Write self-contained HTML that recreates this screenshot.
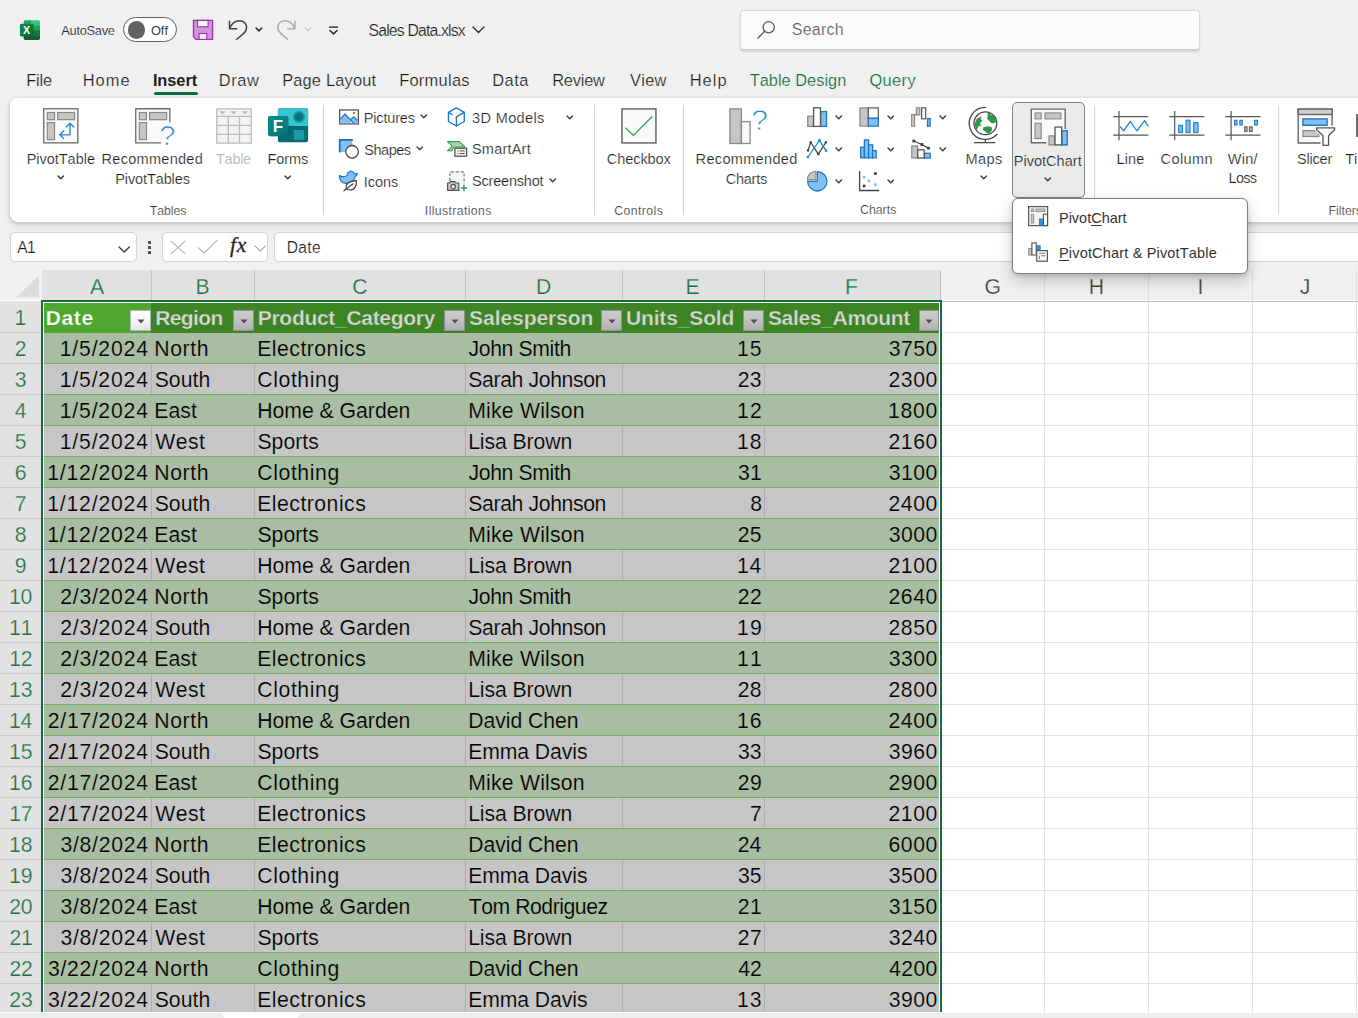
<!DOCTYPE html>
<html><head><meta charset="utf-8"><title>Sales Data.xlsx - Excel</title>
<style>
html,body{margin:0;padding:0;}
body{width:1358px;height:1018px;overflow:hidden;background:#f0f0f0;position:relative;font-family:"Liberation Sans",sans-serif;font-kerning:none;}
.t{position:absolute;white-space:pre;display:block;}
.b{position:absolute;box-sizing:border-box;display:block;}
u{text-decoration-thickness:1.3px;text-underline-offset:2px;}
</style></head><body>
<header id="titlebar">
<svg class="b" style="left:19px;top:19px;" width="22" height="22" viewBox="0 0 22 22">
<defs><clipPath id="xc"><rect x="4.7" y="1.2" width="16.3" height="19.7" rx="1.6"/></clipPath>
<linearGradient id="xg" x1="0" y1="0" x2="1" y2="1"><stop offset="0" stop-color="#18884f"/><stop offset="1" stop-color="#0b6631"/></linearGradient></defs>
<g clip-path="url(#xc)">
<rect x="4" y="1" width="8.7" height="5.1" fill="#21a366"/><rect x="12.7" y="1" width="9" height="5.1" fill="#33c481"/>
<rect x="4" y="6.1" width="8.7" height="5" fill="#107c41"/><rect x="12.7" y="6.1" width="9" height="5" fill="#21a366"/>
<rect x="4" y="11.1" width="8.7" height="5" fill="#185c37"/><rect x="12.7" y="11.1" width="9" height="5" fill="#107c41"/>
<rect x="4" y="16.1" width="18" height="5" fill="#185c37"/>
</g>
<rect x="1.6" y="5.4" width="13.2" height="12.6" rx="1.3" fill="#0a5a2c" opacity=".35"/>
<rect x="0.9" y="4.7" width="13.6" height="12.6" rx="1.3" fill="url(#xg)"/>
<text x="7.6" y="14.9" font-family="Liberation Sans, sans-serif" font-weight="700" font-size="10.6" fill="#fff" text-anchor="middle">X</text>
</svg>
<span class="t" style="left:61.27px;top:22.50px;font-size:12.8px;line-height:15px;letter-spacing:-0.259px;color:#1e1e1e;-webkit-text-stroke:.15px #f0f0f0;">AutoSave</span>
<div class="b" style="left:123px;top:17px;width:54px;height:24.5px;border:1px solid #5f5f5f;border-radius:12.5px;background:#fff;"></div>
<div class="b" style="left:127.5px;top:21.25px;width:17.5px;height:17.5px;border-radius:50%;background:#616161;"></div>
<span class="t" style="left:150.89px;top:22.50px;font-size:12.8px;line-height:15px;letter-spacing:0.009px;color:#3a3a3a;">Off</span>
<svg class="b" style="left:192px;top:19px;" width="22" height="22" viewBox="0 0 22 22">
<path d="M1.5 1.4 H20.6 V20.4 H4 L1.5 17.7 Z" fill="#d392dc" stroke="#9a2fb0" stroke-width="1.3" stroke-linejoin="miter"/>
<rect x="5.6" y="1.4" width="10.5" height="6.4" fill="#fbf3fc" stroke="#9a2fb0" stroke-width="1.1"/>
<rect x="7.1" y="14.5" width="7.7" height="5.9" fill="#fbf3fc" stroke="#9a2fb0" stroke-width="1.1"/>
</svg>
<svg class="b" style="left:226px;top:17px;" width="24" height="26" viewBox="0 0 24 26"><path d="M3.5 3.7 V11.8 H11.2" fill="none" stroke="#444" stroke-width="1.5" stroke-linecap="butt" stroke-linejoin="miter"/><path d="M3.8 11.4 C5.6 6.9 9.3 3.8 13.6 3.8 C17.8 3.8 20.6 7 20.6 10.6 C20.6 13 19.6 14.7 18 16.1 L10.2 22.7" fill="none" stroke="#444" stroke-width="1.5" stroke-linecap="butt" stroke-linejoin="round"/></svg>
<svg class="b" style="left:254.4px;top:26.45px;" width="9.8" height="6.9" viewBox="0 0 9.8 6.9"><path d="M2 2 L4.9 4.9 L7.8 2" fill="none" stroke="#2a2a2a" stroke-width="1.5" stroke-linecap="round" stroke-linejoin="round"/></svg>
<svg class="b" style="left:274px;top:17px;" width="24" height="26" viewBox="0 0 24 26"><g transform="translate(24.4,0) scale(-1,1)"><path d="M3.5 3.7 V11.8 H11.2" fill="none" stroke="#adadad" stroke-width="1.5" stroke-linecap="butt" stroke-linejoin="miter"/><path d="M3.8 11.4 C5.6 6.9 9.3 3.8 13.6 3.8 C17.8 3.8 20.6 7 20.6 10.6 C20.6 13 19.6 14.7 18 16.1 L10.2 22.7" fill="none" stroke="#adadad" stroke-width="1.5" stroke-linecap="butt" stroke-linejoin="round"/></g></svg>
<svg class="b" style="left:302.5px;top:26.45px;" width="9.6" height="6.7" viewBox="0 0 9.6 6.7"><path d="M2 2 L4.8 4.7 L7.6 2" fill="none" stroke="#c6c6c6" stroke-width="1.3" stroke-linecap="round" stroke-linejoin="round"/></svg>
<svg class="b" style="left:326px;top:23px;" width="14" height="14" viewBox="0 0 14 14"><path d="M3 4.1 H12" stroke="#2a2a2a" stroke-width="1.4" fill="none"/><path d="M3.9 7.5 L7.5 10.9 L11.1 7.5" stroke="#2a2a2a" stroke-width="1.5" fill="none" stroke-linecap="round" stroke-linejoin="round"/></svg>
<span class="t" style="left:368.53px;top:22.20px;font-size:15.8px;line-height:17px;letter-spacing:-0.832px;color:#1e1e1e;-webkit-text-stroke:.2px #f0f0f0;">Sales Data.xlsx</span>
<svg class="b" style="left:470.5px;top:25.2px;" width="15" height="9.6" viewBox="0 0 15 9.6"><path d="M2 2 L7.5 7.6 L13 2" fill="none" stroke="#333" stroke-width="1.4" stroke-linecap="round" stroke-linejoin="round"/></svg>
<div class="b" style="left:740px;top:10px;width:460px;height:39.5px;background:#fbfbfb;border:1px solid #d9d9d9;border-bottom-color:#c9c9c9;border-radius:4px;box-shadow:0 1.5px 2px rgba(0,0,0,.13);"></div>
<svg class="b" style="left:755px;top:19px;" width="22" height="22" viewBox="0 0 22 22"><circle cx="13.7" cy="8.3" r="5.6" fill="none" stroke="#5a5a5a" stroke-width="1.3"/><path d="M9.7 12.3 L3 19" stroke="#5a5a5a" stroke-width="1.3" stroke-linecap="round"/></svg>
<span class="t" style="left:791.77px;top:21.00px;font-size:16px;line-height:17px;letter-spacing:0.214px;color:#5a5a5a;-webkit-text-stroke:.2px #fbfbfb;">Search</span>
</header>
<nav id="ribbon-tabs">
<span class="t" style="left:26.15px;top:70.50px;font-size:16.4px;line-height:18px;letter-spacing:-0.117px;color:#1e1e1e;-webkit-text-stroke:.2px #f0f0f0;">File</span>
<span class="t" style="left:82.65px;top:70.50px;font-size:16.4px;line-height:18px;letter-spacing:1.109px;color:#1e1e1e;-webkit-text-stroke:.2px #f0f0f0;">Home</span>
<span class="t" style="left:218.65px;top:70.50px;font-size:16.4px;line-height:18px;letter-spacing:0.679px;color:#1e1e1e;-webkit-text-stroke:.2px #f0f0f0;">Draw</span>
<span class="t" style="left:282.15px;top:70.50px;font-size:16.4px;line-height:18px;letter-spacing:0.187px;color:#1e1e1e;-webkit-text-stroke:.2px #f0f0f0;">Page Layout</span>
<span class="t" style="left:399.15px;top:70.50px;font-size:16.4px;line-height:18px;letter-spacing:0.299px;color:#1e1e1e;-webkit-text-stroke:.2px #f0f0f0;">Formulas</span>
<span class="t" style="left:492.15px;top:70.50px;font-size:16.4px;line-height:18px;letter-spacing:0.568px;color:#1e1e1e;-webkit-text-stroke:.2px #f0f0f0;">Data</span>
<span class="t" style="left:552.15px;top:70.50px;font-size:16.4px;line-height:18px;letter-spacing:-0.193px;color:#1e1e1e;-webkit-text-stroke:.2px #f0f0f0;">Review</span>
<span class="t" style="left:629.93px;top:70.50px;font-size:16.4px;line-height:18px;letter-spacing:0.328px;color:#1e1e1e;-webkit-text-stroke:.2px #f0f0f0;">View</span>
<span class="t" style="left:689.65px;top:70.50px;font-size:16.4px;line-height:18px;letter-spacing:1.102px;color:#1e1e1e;-webkit-text-stroke:.2px #f0f0f0;">Help</span>
<span class="t" style="left:152.90px;top:70.50px;font-size:16.4px;line-height:18px;letter-spacing:-0.072px;color:#1f1f1f;font-weight:700;">Insert</span>
<div class="b" style="left:154px;top:91.7px;width:43.5px;height:2.9px;background:#0f703b;border-radius:1.5px;"></div>
<span class="t" style="left:749.63px;top:70.50px;font-size:16.4px;line-height:18px;letter-spacing:0.009px;color:#0e6e3a;-webkit-text-stroke:.2px #f0f0f0;">Table Design</span>
<span class="t" style="left:869.42px;top:70.50px;font-size:16.4px;line-height:18px;letter-spacing:0.412px;color:#0e6e3a;-webkit-text-stroke:.2px #f0f0f0;">Query</span>
</nav>
<section id="ribbon">
<div class="b" style="left:10px;top:97.5px;width:1360px;height:124.3px;background:#fff;border-radius:8px 0 0 8px;box-shadow:0 1px 4px rgba(0,0,0,.18),0 4px 8px rgba(0,0,0,.08);"></div>
<svg class="b" style="left:42px;top:107px;" width="38" height="38" viewBox="0 0 38 38"><rect x="1.75" y="1.75" width="34.1" height="34.1" fill="#fafafa" stroke="#696969" stroke-width="1.3"/><rect x="5.3" y="5.5" width="7.2" height="7.2" fill="#c8c6c4" stroke="#8a8886" stroke-width="1.2"/><rect x="15.6" y="5.5" width="17" height="7.2" fill="#c8c6c4" stroke="#8a8886" stroke-width="1.2"/><rect x="5.3" y="15.6" width="7.2" height="17" fill="#c8c6c4" stroke="#8a8886" stroke-width="1.2"/><path d="M18.2 27.8 H28 V16.6 M21.6 24 L17.8 27.8 L21.6 31.6 M24.3 20 L28 16.2 L31.7 20" fill="none" stroke="#1e88d2" stroke-width="1.35" stroke-linecap="round" stroke-linejoin="round"/></svg>
<span class="t" style="left:26.71px;top:150.80px;font-size:14.5px;line-height:16px;letter-spacing:-0.030px;color:#1e1e1e;-webkit-text-stroke:.2px #fff;">PivotTable</span>
<svg class="b" style="left:55.55px;top:173.93px;" width="9.5" height="6.75" viewBox="0 0 9.5 6.75"><path d="M2 2 L4.75 4.75 L7.5 2" fill="none" stroke="#333" stroke-width="1.35" stroke-linecap="round" stroke-linejoin="round"/></svg>
<svg class="b" style="left:134px;top:107px;" width="42" height="42" viewBox="0 0 42 42"><path d="M1.75 1.75 H35.85 V35.85 H1.75 Z" fill="#fafafa"/><path d="M35.85 15.5 V1.75 H1.75 V35.85 H27" fill="none" stroke="#696969" stroke-width="1.3"/><rect x="5.3" y="5.5" width="7.2" height="7.2" fill="#c8c6c4" stroke="#8a8886" stroke-width="1.2"/><rect x="15.6" y="5.5" width="17" height="7.2" fill="#c8c6c4" stroke="#8a8886" stroke-width="1.2"/><rect x="5.3" y="15.6" width="7.2" height="17" fill="#c8c6c4" stroke="#8a8886" stroke-width="1.2"/><text x="25.4" y="38.2" font-family="Liberation Sans, sans-serif" font-size="28.5" fill="#1e88d2" stroke="#fcfcfc" stroke-width=".7">?</text></svg>
<span class="t" style="left:101.61px;top:150.80px;font-size:14.5px;line-height:16px;letter-spacing:0.280px;color:#1e1e1e;-webkit-text-stroke:.2px #fff;">Recommended</span>
<span class="t" style="left:115.21px;top:170.60px;font-size:14.5px;line-height:16px;letter-spacing:-0.104px;color:#1e1e1e;-webkit-text-stroke:.2px #fff;">PivotTables</span>
<svg class="b" style="left:215px;top:107px;" width="38" height="38" viewBox="0 0 38 38">
<rect x="1.8" y="1.9" width="34.4" height="34.2" fill="#f4f4f4" stroke="#bcbcbc" stroke-width="1.3"/>
<path d="M1.8 9.3 H36.2 M1.8 18.3 H36.2 M1.8 27.4 H36.2 M13.3 9.3 V36 M24.5 9.3 V36" stroke="#bcbcbc" stroke-width="1.3" fill="none"/>
<path d="M4.2 4.3 H10.8 L7.5 7.6 Z M15.4 4.3 H22 L18.7 7.6 Z M26.7 4.3 H33.3 L30 7.6 Z" fill="#bcbcbc"/>
</svg>
<span class="t" style="left:216.07px;top:150.80px;font-size:14.5px;line-height:16px;letter-spacing:-0.300px;color:#bdbdbd;">Table</span>
<svg class="b" style="left:267px;top:107px;" width="42" height="37" viewBox="0 0 42 37">
<defs><linearGradient id="fg" x1="0" y1="0" x2="1" y2="1"><stop offset="0" stop-color="#058f92"/><stop offset="1" stop-color="#037478"/></linearGradient></defs>
<rect x="10.9" y="1.2" width="30.2" height="34" rx="1.8" fill="#036c70"/>
<path d="M10.9 3 A1.8 1.8 0 0 1 12.7 1.2 H39.3 A1.8 1.8 0 0 1 41.100 3 V19 H10.9 Z" fill="#37c6d0"/>
<circle cx="32" cy="9.9" r="6" fill="#1a9ba1"/><circle cx="32" cy="9.9" r="4.2" fill="#03787c"/>
<rect x="26.8" y="23" width="10.3" height="9.8" fill="#1a9ba1"/>
<rect x="2" y="10" width="20.1" height="19.9" rx="1.6" fill="#025f63" opacity=".35"/>
<rect x="1" y="9" width="20.1" height="19.9" rx="1.6" fill="url(#fg)"/>
<text x="11" y="25" font-family="Liberation Sans, sans-serif" font-weight="700" font-size="17" fill="#fff" text-anchor="middle">F</text>
</svg>
<span class="t" style="left:267.41px;top:150.80px;font-size:14.5px;line-height:16px;letter-spacing:-0.041px;color:#1e1e1e;-webkit-text-stroke:.2px #fff;">Forms</span>
<svg class="b" style="left:282.75px;top:174.12px;" width="9.5" height="6.75" viewBox="0 0 9.5 6.75"><path d="M2 2 L4.75 4.75 L7.5 2" fill="none" stroke="#333" stroke-width="1.35" stroke-linecap="round" stroke-linejoin="round"/></svg>
<span class="t" style="left:149.72px;top:203.50px;font-size:12.3px;line-height:14px;letter-spacing:-0.039px;color:#333;-webkit-text-stroke:.2px #fff;">Tables</span>
<div class="b" style="left:323.0px;top:104.5px;width:1px;height:110px;background:#d4d4d4;"></div>
<svg class="b" style="left:338px;top:108px;" width="22" height="18" viewBox="0 0 22 18">
<rect x="1.65" y="1.95" width="18.7" height="14" fill="#fff" stroke="#555" stroke-width="1.3"/>
<path d="M2.3 11.3 L6.9 6 L14 13.2 L12 15.3 H2.3 Z" fill="#83bff0"/>
<path d="M12.3 11.6 L15.7 8.8 L19.7 12.6 V15.3 H15.9 Z" fill="#83bff0"/>
<path d="M2.3 11.3 L6.9 6 L16 15.3 M12.4 11.6 L15.7 8.8 L19.7 12.6" fill="none" stroke="#1f78c6" stroke-width="1.2"/>
<circle cx="16" cy="5" r="1.25" fill="#e8731a"/>
</svg>
<span class="t" style="left:363.81px;top:109.80px;font-size:14.5px;line-height:16px;letter-spacing:-0.181px;color:#1e1e1e;-webkit-text-stroke:.2px #fff;">Pictures</span>
<svg class="b" style="left:418.65px;top:113.33px;" width="9.5" height="6.75" viewBox="0 0 9.5 6.75"><path d="M2 2 L4.75 4.75 L7.5 2" fill="none" stroke="#333" stroke-width="1.3" stroke-linecap="round" stroke-linejoin="round"/></svg>
<svg class="b" style="left:338px;top:138px;" width="24" height="22" viewBox="0 0 24 22">
<path d="M1.6 1.9 H14.3 V13.9 H1.6 Z" fill="#83bff0"/>
<path d="M1.7 14.5 V1.8 H14.9" fill="none" stroke="#1b6fbd" stroke-width="1.7"/>
<circle cx="14.1" cy="13.8" r="6.3" fill="#fff" stroke="#444" stroke-width="1.3"/>
</svg>
<span class="t" style="left:364.34px;top:141.60px;font-size:14.5px;line-height:16px;letter-spacing:-0.479px;color:#1e1e1e;-webkit-text-stroke:.2px #fff;">Shapes</span>
<svg class="b" style="left:414.75px;top:145.03px;" width="9.5" height="6.75" viewBox="0 0 9.5 6.75"><path d="M2 2 L4.75 4.75 L7.5 2" fill="none" stroke="#333" stroke-width="1.3" stroke-linecap="round" stroke-linejoin="round"/></svg>
<svg class="b" style="left:338px;top:170px;" width="22" height="22" viewBox="0 0 22 22">
<path d="M1.3 5.6 C4.5 7.2 8 7 9.2 5.4 C9 2.6 11.5 1 14 1.6 C15.5 2 16.3 3 16.8 4 L19.3 3.4 C19 5.6 17.6 6.6 16.9 7 C16.6 9.5 14.5 11.6 12 12.3 L8 13.4 C4 13.8 1.6 10.5 1.3 5.6 Z" fill="#83bff0" stroke="#1f78c6" stroke-width="1.2" stroke-linejoin="round"/>
<path d="M8.3 18.4 C7.2 14 11 11 18.4 10.7 C18.9 15.6 16.6 20.3 11.6 20 C10 19.9 9 19.3 8.3 18.4 Z" fill="#fff" stroke="#444" stroke-width="1.2" stroke-linejoin="round"/>
<path d="M5.9 20.8 L15 13.8" stroke="#444" stroke-width="1.2" stroke-linecap="round"/>
</svg>
<span class="t" style="left:363.66px;top:173.80px;font-size:14.5px;line-height:16px;letter-spacing:-0.024px;color:#1e1e1e;-webkit-text-stroke:.2px #fff;">Icons</span>
<svg class="b" style="left:446px;top:106px;" width="22" height="22" viewBox="0 0 22 22">
<path d="M10.4 1.9 L18.3 6.4 V15.5 L10.4 20 L2.5 15.5 V6.4 Z" fill="#fff" stroke="#1f78c6" stroke-width="1.4" stroke-linejoin="round"/>
<path d="M18.3 6.4 L10.4 11 V20 M2.5 6.4 L6.2 8.5" fill="none" stroke="#1f78c6" stroke-width="1.4" stroke-linecap="round"/>
</svg>
<span class="t" style="left:472.05px;top:109.50px;font-size:14.5px;line-height:16px;letter-spacing:0.371px;color:#1e1e1e;-webkit-text-stroke:.2px #fff;">3D Models</span>
<svg class="b" style="left:564.75px;top:114.12px;" width="9.5" height="6.75" viewBox="0 0 9.5 6.75"><path d="M2 2 L4.75 4.75 L7.5 2" fill="none" stroke="#333" stroke-width="1.3" stroke-linecap="round" stroke-linejoin="round"/></svg>
<svg class="b" style="left:446px;top:140px;" width="23" height="18" viewBox="0 0 23 18">
<path d="M1.5 1.6 H13.3 L18.6 6.4 V7 H8 L6 10.8 H1.5 L6.3 6.2 Z" fill="#a3d9af" stroke="#2f9a54" stroke-width="1.1" stroke-linejoin="round"/>
<rect x="8.9" y="8.2" width="11.7" height="8" fill="#f2f2f2" stroke="#555" stroke-width="1.3"/>
<path d="M11.3 10.9 H12.3 M13.6 10.9 H18.6 M11.3 13.5 H12.3 M13.6 13.5 H18.6" stroke="#555" stroke-width="1"/>
</svg>
<span class="t" style="left:471.94px;top:141.40px;font-size:14.5px;line-height:16px;letter-spacing:0.224px;color:#1e1e1e;-webkit-text-stroke:.2px #fff;">SmartArt</span>
<svg class="b" style="left:446px;top:170px;" width="22" height="22" viewBox="0 0 22 22">
<path d="M3.9 11 V1.8 H18.1 V14.5" fill="#f8f8f8" stroke="#777" stroke-width="1.2" stroke-dasharray="3.2 1.8"/>
<path d="M1.6 13 H3.6 L4.6 11.6 H8.8 L9.8 13 H12.8 V20.3 H1.6 Z" fill="#c8c8c8" stroke="#4f4f4f" stroke-width="1.2" stroke-linejoin="round"/>
<circle cx="7.2" cy="16.6" r="2.2" fill="#fff" stroke="#4f4f4f" stroke-width="1.2"/>
<path d="M14.8 18.1 H21 M17.9 15 V21.2" stroke="#2f9a54" stroke-width="1.5"/>
</svg>
<span class="t" style="left:471.94px;top:173.40px;font-size:14.5px;line-height:16px;letter-spacing:-0.187px;color:#1e1e1e;-webkit-text-stroke:.2px #fff;">Screenshot</span>
<svg class="b" style="left:547.65px;top:177.12px;" width="9.5" height="6.75" viewBox="0 0 9.5 6.75"><path d="M2 2 L4.75 4.75 L7.5 2" fill="none" stroke="#333" stroke-width="1.3" stroke-linecap="round" stroke-linejoin="round"/></svg>
<span class="t" style="left:424.86px;top:203.50px;font-size:12.3px;line-height:14px;letter-spacing:0.364px;color:#333;-webkit-text-stroke:.2px #fff;">Illustrations</span>
<div class="b" style="left:594.0px;top:104.5px;width:1px;height:110px;background:#d4d4d4;"></div>
<svg class="b" style="left:620px;top:107px;" width="38" height="38" viewBox="0 0 38 38"><rect x="1.95" y="1.95" width="34" height="34" fill="#fafafa" stroke="#5c5c5c" stroke-width="1.4"/><path d="M5.4 20.7 L13.4 28.4 L32.3 9.5" fill="none" stroke="#2ea44f" stroke-width="1.35"/></svg>
<span class="t" style="left:606.86px;top:150.80px;font-size:14.5px;line-height:16px;letter-spacing:-0.069px;color:#1e1e1e;-webkit-text-stroke:.2px #fff;">Checkbox</span>
<span class="t" style="left:614.28px;top:203.50px;font-size:12.3px;line-height:14px;letter-spacing:0.395px;color:#333;-webkit-text-stroke:.2px #fff;">Controls</span>
<div class="b" style="left:683.0px;top:104.5px;width:1px;height:110px;background:#d4d4d4;"></div>
<svg class="b" style="left:727px;top:106px;" width="42" height="40" viewBox="0 0 42 40">
<rect x="2.9" y="2.9" width="11.5" height="34.6" fill="#c8c6c4" stroke="#8a8886" stroke-width="1.3"/>
<rect x="14.4" y="15.6" width="8.7" height="21.9" fill="#fafafa" stroke="#8a8886" stroke-width="1.3"/>
<text x="24.3" y="23.8" font-family="Liberation Sans, sans-serif" font-size="30" fill="#1e88d2" stroke="#fff" stroke-width=".8">?</text>
</svg>
<span class="t" style="left:695.61px;top:150.80px;font-size:14.5px;line-height:16px;letter-spacing:0.330px;color:#1e1e1e;-webkit-text-stroke:.2px #fff;">Recommended</span>
<span class="t" style="left:725.66px;top:170.60px;font-size:14.5px;line-height:16px;letter-spacing:-0.229px;color:#1e1e1e;-webkit-text-stroke:.2px #fff;">Charts</span>
<svg class="b" style="left:806px;top:106px;" width="23" height="23" viewBox="0 0 23 23"><rect x="1.70" y="10.20" width="5.80" height="10.20" fill="#c8c6c4" stroke="#8a8886" stroke-width="1.2"/><rect x="14.60" y="5.60" width="5.90" height="14.80" fill="#83bff0" stroke="#1f78c6" stroke-width="1.3"/><rect x="7.60" y="1.80" width="6.90" height="18.60" fill="#fff" stroke="#555" stroke-width="1.3"/></svg>
<svg class="b" style="left:833.65px;top:114.12px;" width="9.5" height="6.75" viewBox="0 0 9.5 6.75"><path d="M2 2 L4.75 4.75 L7.5 2" fill="none" stroke="#333" stroke-width="1.3" stroke-linecap="round" stroke-linejoin="round"/></svg>
<svg class="b" style="left:858px;top:106px;" width="23" height="23" viewBox="0 0 23 23"><rect x="1.90" y="1.90" width="8.40" height="18.20" fill="#c8c6c4" stroke="#8a8886" stroke-width="1.2"/><rect x="10.30" y="1.90" width="10.00" height="10.40" fill="#fcfcfc" stroke="#555" stroke-width="1.2"/><rect x="10.30" y="12.30" width="10.00" height="7.80" fill="#83bff0" stroke="#1f78c6" stroke-width="1.3"/></svg>
<svg class="b" style="left:885.65px;top:114.12px;" width="9.5" height="6.75" viewBox="0 0 9.5 6.75"><path d="M2 2 L4.75 4.75 L7.5 2" fill="none" stroke="#333" stroke-width="1.3" stroke-linecap="round" stroke-linejoin="round"/></svg>
<svg class="b" style="left:910px;top:106px;" width="23" height="23" viewBox="0 0 23 23"><path d="M1.6000000000000227 20.299999999999997 V8.599999999999994 H6.2999999999999545 V1.7999999999999972 H9.799999999999955 V8.900000000000006 H4.600000000000023 V20.299999999999997 Z" fill="#c8c6c4" stroke="#8a8886" stroke-width="1.1"/><rect x="11.60" y="1.80" width="4.10" height="11.00" fill="#fcfcfc" stroke="#555" stroke-width="1.2"/><rect x="17.50" y="12.60" width="2.70" height="7.60" fill="#83bff0" stroke="#1f78c6" stroke-width="1.3"/></svg>
<svg class="b" style="left:937.55px;top:114.12px;" width="9.5" height="6.75" viewBox="0 0 9.5 6.75"><path d="M2 2 L4.75 4.75 L7.5 2" fill="none" stroke="#333" stroke-width="1.3" stroke-linecap="round" stroke-linejoin="round"/></svg>
<svg class="b" style="left:806px;top:138px;" width="23" height="23" viewBox="0 0 23 23"><path d="M2.0 12.4 L4.7 4.3 L12.3 16.1 L19.9 4.3" fill="none" stroke="#3b3b3b" stroke-width="1.2" stroke-linejoin="round"/><rect x="0.9" y="11.3" width="2.2" height="2.2" fill="#3b3b3b"/><rect x="3.6" y="3.2" width="2.2" height="2.2" fill="#3b3b3b"/><rect x="11.2" y="15.0" width="2.2" height="2.2" fill="#3b3b3b"/><rect x="18.8" y="3.2" width="2.2" height="2.2" fill="#3b3b3b"/><path d="M2.0 19.0 L13.4 2.3 L20.1 12.6" fill="none" stroke="#1e88d2" stroke-width="1.3" stroke-linejoin="round"/><rect x="0.8" y="17.8" width="2.4" height="2.4" fill="#1e88d2"/><rect x="12.2" y="1.1" width="2.4" height="2.4" fill="#1e88d2"/><rect x="18.9" y="11.4" width="2.4" height="2.4" fill="#1e88d2"/></svg>
<svg class="b" style="left:833.65px;top:146.03px;" width="9.5" height="6.75" viewBox="0 0 9.5 6.75"><path d="M2 2 L4.75 4.75 L7.5 2" fill="none" stroke="#333" stroke-width="1.3" stroke-linecap="round" stroke-linejoin="round"/></svg>
<svg class="b" style="left:858px;top:138px;" width="23" height="23" viewBox="0 0 23 23"><rect x="2.70" y="9.20" width="3.70" height="10.60" fill="#83bff0" stroke="#1f78c6" stroke-width="1.3"/><rect x="6.40" y="1.90" width="4.20" height="17.90" fill="#83bff0" stroke="#1f78c6" stroke-width="1.3"/><rect x="10.60" y="6.80" width="4.00" height="13.00" fill="#83bff0" stroke="#1f78c6" stroke-width="1.3"/><rect x="14.60" y="12.70" width="3.60" height="7.10" fill="#83bff0" stroke="#1f78c6" stroke-width="1.3"/></svg>
<svg class="b" style="left:885.65px;top:146.03px;" width="9.5" height="6.75" viewBox="0 0 9.5 6.75"><path d="M2 2 L4.75 4.75 L7.5 2" fill="none" stroke="#333" stroke-width="1.3" stroke-linecap="round" stroke-linejoin="round"/></svg>
<svg class="b" style="left:910px;top:138px;" width="23" height="23" viewBox="0 0 23 23"><rect x="1.80" y="8.00" width="5.80" height="12.00" fill="#c8c6c4" stroke="#8a8886" stroke-width="1.2"/><rect x="14.40" y="15.30" width="5.80" height="4.70" fill="#83bff0" stroke="#1f78c6" stroke-width="1.3"/><rect x="7.70" y="11.80" width="6.50" height="8.20" fill="#fcfcfc" stroke="#555" stroke-width="1.3"/><path d="M3.8 3.0 L11.9 6.5 L18.4 10.2" fill="none" stroke="#3b3b3b" stroke-width="1.2"/><rect x="2.4" y="1.6" width="2.8" height="2.8" fill="#3b3b3b"/><rect x="10.5" y="5.1" width="2.8" height="2.8" fill="#3b3b3b"/><rect x="17.0" y="8.8" width="2.8" height="2.8" fill="#3b3b3b"/></svg>
<svg class="b" style="left:937.55px;top:146.03px;" width="9.5" height="6.75" viewBox="0 0 9.5 6.75"><path d="M2 2 L4.75 4.75 L7.5 2" fill="none" stroke="#333" stroke-width="1.3" stroke-linecap="round" stroke-linejoin="round"/></svg>
<svg class="b" style="left:806px;top:170px;" width="23" height="23" viewBox="0 0 23 23"><path d="M11.3 11.3 V1.6 A9.7 9.7 0 1 1 1.6 11.3 Z" fill="#83bff0" stroke="#1f78c6" stroke-width="1.3" stroke-linejoin="round"/><path d="M9.9 9.9 H1.2 A8.7 8.7 0 0 1 9.9 1.2 Z" fill="#c8c6c4" stroke="#8a8886" stroke-width="1.1" stroke-linejoin="round"/></svg>
<svg class="b" style="left:833.65px;top:178.03px;" width="9.5" height="6.75" viewBox="0 0 9.5 6.75"><path d="M2 2 L4.75 4.75 L7.5 2" fill="none" stroke="#333" stroke-width="1.3" stroke-linecap="round" stroke-linejoin="round"/></svg>
<svg class="b" style="left:858px;top:170px;" width="23" height="23" viewBox="0 0 23 23"><path d="M1.6 1 V20.5 H21" fill="none" stroke="#444" stroke-width="1.3"/><rect x="16.1" y="2.3" width="2.6" height="2.6" fill="#333"/><rect x="4.8" y="14.7" width="2.6" height="2.6" fill="#333"/><rect x="4.8" y="5.9" width="2.6" height="2.6" fill="#7fbdf0"/><rect x="9.6" y="9.6" width="2.6" height="2.6" fill="#7fbdf0"/><rect x="16.1" y="13.3" width="2.6" height="2.6" fill="#7fbdf0"/></svg>
<svg class="b" style="left:885.65px;top:178.03px;" width="9.5" height="6.75" viewBox="0 0 9.5 6.75"><path d="M2 2 L4.75 4.75 L7.5 2" fill="none" stroke="#333" stroke-width="1.3" stroke-linecap="round" stroke-linejoin="round"/></svg>
<span class="t" style="left:859.98px;top:203.20px;font-size:12.3px;line-height:14px;letter-spacing:0.028px;color:#333;-webkit-text-stroke:.2px #fff;">Charts</span>
<svg class="b" style="left:966px;top:105px;" width="34" height="40" viewBox="0 0 34 40">
<circle cx="19.4" cy="18.3" r="11.4" fill="#fff" stroke="#484848" stroke-width="1.3"/>
<path d="M11.2 13.2 L15.2 11.8 L14.8 14.6 L16.6 15.6 L14 18.3 L15.6 21.4 L13.3 20.4 L11.8 22.6 L10.6 25.2 C8.6 22.4 8.2 16.6 11.2 13.2 Z" fill="#2e9648"/>
<path d="M21.6 8 L23.6 7.6 L24.6 9.8 L27.4 10.4 L29.6 14 L30 17.2 L27 18.4 L25 17.8 L22.8 15.4 L21 13.6 L21.8 11 Z" fill="#2e9648"/>
<path d="M17.2 22.6 L21.6 21.2 L25.4 22 L26.2 24.6 L24.4 27.8 L21.4 28.6 L19.2 26.6 L17 25 Z" fill="#2e9648"/>
<path d="M19.6 2.4 A16 16 0 1 0 31 29.3" fill="none" stroke="#484848" stroke-width="1.3" stroke-linecap="round"/>
<path d="M19.4 34.3 V37.7 M8 37.7 H29.4" fill="none" stroke="#484848" stroke-width="1.3"/>
</svg>
<span class="t" style="left:965.61px;top:150.60px;font-size:14.5px;line-height:16px;letter-spacing:0.419px;color:#1e1e1e;-webkit-text-stroke:.2px #fff;">Maps</span>
<svg class="b" style="left:978.75px;top:174.32px;" width="9.5" height="6.75" viewBox="0 0 9.5 6.75"><path d="M2 2 L4.75 4.75 L7.5 2" fill="none" stroke="#333" stroke-width="1.3" stroke-linecap="round" stroke-linejoin="round"/></svg>
<div class="b" style="left:1012px;top:102px;width:73px;height:95.6px;background:#ebebeb;border:1px solid #848484;border-radius:5px;"></div>
<svg class="b" style="left:1029px;top:107px;" width="40" height="40" viewBox="0 0 40 40">
<path d="M1.7 1.4 H36.9 V36.3 H1.7 Z" fill="#fafafa"/>
<path d="M36.2 22 V2.1 H2.3 V35.7 H17.4" fill="none" stroke="#696969" stroke-width="1.4"/>
<rect x="6" y="5.9" width="6.2" height="6" fill="#c8c6c4" stroke="#8a8886" stroke-width="1.1"/>
<rect x="16" y="5.9" width="16" height="6" fill="#c8c6c4" stroke="#8a8886" stroke-width="1.1"/>
<rect x="6" y="16.2" width="6.2" height="15.4" fill="#c8c6c4" stroke="#8a8886" stroke-width="1.1"/>
<rect x="20" y="28.9" width="5.8" height="9" fill="#c8c6c4" stroke="#8a8886" stroke-width="1.2"/>
<rect x="32.7" y="23.7" width="5.5" height="14.2" fill="#83bff0" stroke="#1f78c6" stroke-width="1.4"/>
<rect x="26" y="20.1" width="6.7" height="17.8" fill="#fff" stroke="#555" stroke-width="1.3"/>
</svg>
<span class="t" style="left:1013.71px;top:152.60px;font-size:14.5px;line-height:16px;letter-spacing:0.034px;color:#1e1e1e;-webkit-text-stroke:.2px #ebebeb;">PivotChart</span>
<svg class="b" style="left:1042.65px;top:176.12px;" width="9.5" height="6.75" viewBox="0 0 9.5 6.75"><path d="M2 2 L4.75 4.75 L7.5 2" fill="none" stroke="#333" stroke-width="1.3" stroke-linecap="round" stroke-linejoin="round"/></svg>
<div class="b" style="left:1094.0px;top:104.5px;width:1px;height:110px;background:#d4d4d4;"></div>
<svg class="b" style="left:1112px;top:110px;" width="38" height="32" viewBox="0 0 38 32"><path d="M1.3 6.7 H36.4 M1.3 25.1 H36.4 M7 1 V30.3" stroke="#555" stroke-width="1.2" fill="none"/><path d="M8.0 16.6 L11.7 20.8 L18.2 11.3 L25.0 20.8 L32.6 10.6 L36.4 16.4" fill="none" stroke="#1e88d2" stroke-width="1.3" stroke-linejoin="round"/></svg>
<span class="t" style="left:1116.61px;top:150.60px;font-size:14.5px;line-height:16px;letter-spacing:0.073px;color:#1e1e1e;-webkit-text-stroke:.2px #fff;">Line</span>
<svg class="b" style="left:1168px;top:110px;" width="38" height="32" viewBox="0 0 38 32"><path d="M1.3 6.7 H36.5 M1.3 25.1 H36.5 M6.7 1 V30.3" stroke="#555" stroke-width="1.2" fill="none"/><rect x="10.70" y="15.30" width="3.70" height="7.20" fill="#83bff0" stroke="#1e88d2" stroke-width="1.2"/><rect x="18.10" y="10.20" width="3.90" height="12.30" fill="#83bff0" stroke="#1e88d2" stroke-width="1.2"/><rect x="25.70" y="12.60" width="4.30" height="9.90" fill="#83bff0" stroke="#1e88d2" stroke-width="1.2"/></svg>
<span class="t" style="left:1160.56px;top:150.60px;font-size:14.5px;line-height:16px;letter-spacing:0.403px;color:#1e1e1e;-webkit-text-stroke:.2px #fff;">Column</span>
<svg class="b" style="left:1224px;top:110px;" width="38" height="32" viewBox="0 0 38 32"><path d="M1.4 6.7 H36.5 M1.4 25.1 H36.5 M7.1 1 V30.3" stroke="#555" stroke-width="1.2" fill="none"/><rect x="10.60" y="10.30" width="2.40" height="4.70" fill="#83bff0" stroke="#1f78c6" stroke-width="1.1"/><rect x="15.80" y="10.30" width="2.50" height="4.70" fill="#83bff0" stroke="#1f78c6" stroke-width="1.1"/><rect x="30.50" y="10.30" width="2.90" height="4.70" fill="#83bff0" stroke="#1f78c6" stroke-width="1.1"/><rect x="20.70" y="16.90" width="2.30" height="4.50" fill="#c8c8c8" stroke="#555" stroke-width="1.1"/><rect x="25.40" y="16.90" width="2.70" height="4.50" fill="#c8c8c8" stroke="#555" stroke-width="1.1"/></svg>
<span class="t" style="left:1227.74px;top:150.60px;font-size:14.5px;line-height:16px;letter-spacing:0.288px;color:#1e1e1e;-webkit-text-stroke:.2px #fff;">Win/</span>
<span class="t" style="left:1228.51px;top:170.20px;font-size:14.5px;line-height:16px;letter-spacing:-0.672px;color:#1e1e1e;-webkit-text-stroke:.2px #fff;">Loss</span>
<div class="b" style="left:1277.8px;top:104.5px;width:1px;height:110px;background:#d4d4d4;"></div>
<svg class="b" style="left:1296px;top:107px;" width="42" height="40" viewBox="0 0 42 40">
<rect x="2.2" y="2.1" width="34" height="34" fill="#fafafa"/>
<path d="M36.1 18.8 V2.1 H2.2 V36 H24.6" fill="none" stroke="#666" stroke-width="1.4"/>
<rect x="2.2" y="2.1" width="33.9" height="5.4" fill="#cfcfcf" stroke="#666" stroke-width="1.4"/>
<rect x="6.9" y="11.9" width="24.2" height="6.4" fill="#83bff0" stroke="#1f78c6" stroke-width="1.4"/>
<rect x="6.9" y="23.6" width="16" height="5.9" fill="#c8c6c4" stroke="#8a8886" stroke-width="1.2"/>
<path d="M19 19.2 H40.2 V23.4 L34.2 29.2 V39.6 H25.4 V29.2 L19 23.4 Z" fill="#fff"/>
<path d="M20.7 20.8 H38.6 V22.8 L32.6 28.7 V38.3 H27 V28.7 L20.7 22.8 Z" fill="#fafafa" stroke="#555" stroke-width="1.3" stroke-linejoin="round"/>
</svg>
<span class="t" style="left:1297.04px;top:150.60px;font-size:14.5px;line-height:16px;letter-spacing:-0.212px;color:#1e1e1e;-webkit-text-stroke:.2px #fff;">Slicer</span>
<span class="t" style="left:1345.27px;top:150.60px;font-size:14.5px;line-height:16px;letter-spacing:0.000px;color:#1e1e1e;-webkit-text-stroke:.2px #fff;">Ti</span>
<span class="t" style="left:1328.49px;top:204.00px;font-size:12.3px;line-height:14px;letter-spacing:0.000px;color:#333;-webkit-text-stroke:.2px #fff;">Filters</span>
<div class="b" style="left:1356px;top:114.1px;width:4px;height:23.4px;background:#6e6e6e;"></div>
</section>
<section id="formula-bar">
<div class="b" style="left:10px;top:232.4px;width:126.6px;height:29.3px;background:#fff;border:1px solid #d4d4d4;border-radius:5px;"></div>
<span class="t" style="left:17.17px;top:239.30px;font-size:15.6px;line-height:17px;letter-spacing:-0.489px;color:#1e1e1e;-webkit-text-stroke:.2px #fff;">A1</span>
<svg class="b" style="left:116.8px;top:244.5px;" width="14.4" height="9" viewBox="0 0 14.4 9"><path d="M2 2 L7.2 7 L12.4 2" fill="none" stroke="#3a3a3a" stroke-width="1.3" stroke-linecap="round" stroke-linejoin="round"/></svg>
<div class="b" style="left:147.9px;top:241.2px;width:2.9px;height:2.9px;background:#4a4a4a;border-radius:.6px;"></div>
<div class="b" style="left:147.9px;top:246.1px;width:2.9px;height:2.9px;background:#4a4a4a;border-radius:.6px;"></div>
<div class="b" style="left:147.9px;top:251.1px;width:2.9px;height:2.9px;background:#4a4a4a;border-radius:.6px;"></div>
<div class="b" style="left:162.2px;top:232.4px;width:106.3px;height:29.3px;background:#fff;border:1px solid #d4d4d4;border-radius:5px;"></div>
<svg class="b" style="left:169px;top:239px;" width="18" height="17" viewBox="0 0 18 17"><path d="M2.2 2.2 L15.9 14.6 M15.9 2.2 L2.2 14.6" stroke="#b9b9b9" stroke-width="1.2" fill="none" stroke-linecap="round"/></svg>
<svg class="b" style="left:196px;top:238px;" width="24" height="18" viewBox="0 0 24 18"><path d="M2.2 9.6 L8.2 15 L21 2.4" stroke="#b9b9b9" stroke-width="1.2" fill="none" stroke-linecap="round" stroke-linejoin="round"/></svg>
<span class="t" style="left:229.96px;top:232.80px;font-size:21.5px;line-height:24px;letter-spacing:0.000px;color:#222;font-style:italic;font-family:'Liberation Serif',serif;-webkit-text-stroke:.3px #222;letter-spacing:.8px;">fx</span>
<svg class="b" style="left:252.6px;top:243.5px;" width="14.4" height="9" viewBox="0 0 14.4 9"><path d="M2 2 L7.2 7 L12.4 2" fill="none" stroke="#808080" stroke-width="1.0" stroke-linecap="round" stroke-linejoin="round"/></svg>
<div class="b" style="left:274.2px;top:232.4px;width:1100px;height:29.3px;background:#fff;border:1px solid #d4d4d4;border-radius:5px 0 0 5px;"></div>
<span class="t" style="left:286.72px;top:239.30px;font-size:15.6px;line-height:17px;letter-spacing:0.307px;color:#1e1e1e;-webkit-text-stroke:.2px #fff;">Date</span>
</section>
<main id="sheet">
<div class="b" style="left:0px;top:269.6px;width:1358px;height:742.3px;background:#fff;"></div>
<div class="b" style="left:0px;top:269.6px;width:1358px;height:30.6px;background:#f0f0f0;"></div>
<div class="b" style="left:41.6px;top:269.8px;width:898.8px;height:30.4px;background:#e1e1e1;"></div>
<div class="b" style="left:0px;top:300.6px;width:1358px;height:1px;background:#b9b9b9;"></div>
<svg class="b" style="left:15px;top:274px;" width="26" height="25" viewBox="0 0 26 25"><path d="M23.8 1.2 V23.2 H1.6 Z" fill="#dcdcdc"/></svg>
<div class="b" style="left:0px;top:301px;width:41.5px;height:711px;background:#e2e2e2;"></div>
<div class="b" style="left:151px;top:270px;width:1px;height:30.5px;background:#c4c4c4;"></div>
<div class="b" style="left:254px;top:270px;width:1px;height:30.5px;background:#c4c4c4;"></div>
<div class="b" style="left:465px;top:270px;width:1px;height:30.5px;background:#c4c4c4;"></div>
<div class="b" style="left:622px;top:270px;width:1px;height:30.5px;background:#c4c4c4;"></div>
<div class="b" style="left:764px;top:270px;width:1px;height:30.5px;background:#c4c4c4;"></div>
<div class="b" style="left:940px;top:270px;width:1px;height:30.5px;background:#c4c4c4;"></div>
<div class="b" style="left:1044px;top:270px;width:1px;height:30.5px;background:#dcdcdc;"></div>
<div class="b" style="left:1148px;top:270px;width:1px;height:30.5px;background:#dcdcdc;"></div>
<div class="b" style="left:1252px;top:270px;width:1px;height:30.5px;background:#dcdcdc;"></div>
<div class="b" style="left:1356px;top:270px;width:1px;height:30.5px;background:#dcdcdc;"></div>
<span class="t" style="left:89.93px;top:274.80px;font-size:21.2px;line-height:23px;letter-spacing:0.000px;color:#1e7145;-webkit-text-stroke:.25px #e1e1e1;">A</span>
<span class="t" style="left:195.62px;top:274.80px;font-size:21.2px;line-height:23px;letter-spacing:0.000px;color:#1e7145;-webkit-text-stroke:.25px #e1e1e1;">B</span>
<span class="t" style="left:352.21px;top:274.80px;font-size:21.2px;line-height:23px;letter-spacing:0.000px;color:#1e7145;-webkit-text-stroke:.25px #e1e1e1;">C</span>
<span class="t" style="left:535.98px;top:274.80px;font-size:21.2px;line-height:23px;letter-spacing:0.000px;color:#1e7145;-webkit-text-stroke:.25px #e1e1e1;">D</span>
<span class="t" style="left:685.52px;top:274.80px;font-size:21.2px;line-height:23px;letter-spacing:0.000px;color:#1e7145;-webkit-text-stroke:.25px #e1e1e1;">E</span>
<span class="t" style="left:845.08px;top:274.80px;font-size:21.2px;line-height:23px;letter-spacing:0.000px;color:#1e7145;-webkit-text-stroke:.25px #e1e1e1;">F</span>
<span class="t" style="left:984.51px;top:274.80px;font-size:21.2px;line-height:23px;letter-spacing:0.000px;color:#404040;-webkit-text-stroke:.25px #f0f0f0;">G</span>
<span class="t" style="left:1088.84px;top:274.80px;font-size:21.2px;line-height:23px;letter-spacing:0.000px;color:#404040;-webkit-text-stroke:.25px #f0f0f0;">H</span>
<span class="t" style="left:1197.55px;top:274.80px;font-size:21.2px;line-height:23px;letter-spacing:0.000px;color:#404040;-webkit-text-stroke:.25px #f0f0f0;">I</span>
<span class="t" style="left:1299.82px;top:274.80px;font-size:21.2px;line-height:23px;letter-spacing:0.000px;color:#404040;-webkit-text-stroke:.25px #f0f0f0;">J</span>
<div class="b" style="left:942px;top:332px;width:416px;height:1px;background:#e1e1e1;"></div>
<div class="b" style="left:942px;top:363px;width:416px;height:1px;background:#e1e1e1;"></div>
<div class="b" style="left:942px;top:394px;width:416px;height:1px;background:#e1e1e1;"></div>
<div class="b" style="left:942px;top:425px;width:416px;height:1px;background:#e1e1e1;"></div>
<div class="b" style="left:942px;top:456px;width:416px;height:1px;background:#e1e1e1;"></div>
<div class="b" style="left:942px;top:487px;width:416px;height:1px;background:#e1e1e1;"></div>
<div class="b" style="left:942px;top:518px;width:416px;height:1px;background:#e1e1e1;"></div>
<div class="b" style="left:942px;top:549px;width:416px;height:1px;background:#e1e1e1;"></div>
<div class="b" style="left:942px;top:580px;width:416px;height:1px;background:#e1e1e1;"></div>
<div class="b" style="left:942px;top:611px;width:416px;height:1px;background:#e1e1e1;"></div>
<div class="b" style="left:942px;top:642px;width:416px;height:1px;background:#e1e1e1;"></div>
<div class="b" style="left:942px;top:673px;width:416px;height:1px;background:#e1e1e1;"></div>
<div class="b" style="left:942px;top:704px;width:416px;height:1px;background:#e1e1e1;"></div>
<div class="b" style="left:942px;top:735px;width:416px;height:1px;background:#e1e1e1;"></div>
<div class="b" style="left:942px;top:766px;width:416px;height:1px;background:#e1e1e1;"></div>
<div class="b" style="left:942px;top:797px;width:416px;height:1px;background:#e1e1e1;"></div>
<div class="b" style="left:942px;top:828px;width:416px;height:1px;background:#e1e1e1;"></div>
<div class="b" style="left:942px;top:859px;width:416px;height:1px;background:#e1e1e1;"></div>
<div class="b" style="left:942px;top:890px;width:416px;height:1px;background:#e1e1e1;"></div>
<div class="b" style="left:942px;top:921px;width:416px;height:1px;background:#e1e1e1;"></div>
<div class="b" style="left:942px;top:952px;width:416px;height:1px;background:#e1e1e1;"></div>
<div class="b" style="left:942px;top:983px;width:416px;height:1px;background:#e1e1e1;"></div>
<div class="b" style="left:942px;top:1014px;width:416px;height:1px;background:#e1e1e1;"></div>
<div class="b" style="left:1044px;top:301px;width:1px;height:711px;background:#e1e1e1;"></div>
<div class="b" style="left:1148px;top:301px;width:1px;height:711px;background:#e1e1e1;"></div>
<div class="b" style="left:1252px;top:301px;width:1px;height:711px;background:#e1e1e1;"></div>
<div class="b" style="left:1356px;top:301px;width:1px;height:711px;background:#e1e1e1;"></div>
<div class="b" style="left:43px;top:302px;width:898px;height:31px;background:#3d8425;"></div>
<div class="b" style="left:43px;top:302px;width:108.4px;height:31px;background:#4ea72e;"></div>
<div class="b" style="left:43px;top:333px;width:898px;height:30px;background:#a9bda2;"></div>
<div class="b" style="left:43px;top:363px;width:898px;height:1px;background:#74ae60;"></div>
<div class="b" style="left:0px;top:332px;width:41.5px;height:1px;background:#cdcdcd;"></div>
<div class="b" style="left:43px;top:364px;width:898px;height:30px;background:#c6c6c6;"></div>
<div class="b" style="left:43px;top:394px;width:898px;height:1px;background:#74ae60;"></div>
<div class="b" style="left:0px;top:363px;width:41.5px;height:1px;background:#cdcdcd;"></div>
<div class="b" style="left:151px;top:364px;width:1px;height:30px;background:#afafaf;"></div>
<div class="b" style="left:254px;top:364px;width:1px;height:30px;background:#afafaf;"></div>
<div class="b" style="left:465px;top:364px;width:1px;height:30px;background:#afafaf;"></div>
<div class="b" style="left:622px;top:364px;width:1px;height:30px;background:#afafaf;"></div>
<div class="b" style="left:764px;top:364px;width:1px;height:30px;background:#afafaf;"></div>
<div class="b" style="left:43px;top:395px;width:898px;height:30px;background:#a9bda2;"></div>
<div class="b" style="left:43px;top:425px;width:898px;height:1px;background:#74ae60;"></div>
<div class="b" style="left:0px;top:394px;width:41.5px;height:1px;background:#cdcdcd;"></div>
<div class="b" style="left:43px;top:426px;width:898px;height:30px;background:#c6c6c6;"></div>
<div class="b" style="left:43px;top:456px;width:898px;height:1px;background:#74ae60;"></div>
<div class="b" style="left:0px;top:425px;width:41.5px;height:1px;background:#cdcdcd;"></div>
<div class="b" style="left:151px;top:426px;width:1px;height:30px;background:#afafaf;"></div>
<div class="b" style="left:254px;top:426px;width:1px;height:30px;background:#afafaf;"></div>
<div class="b" style="left:465px;top:426px;width:1px;height:30px;background:#afafaf;"></div>
<div class="b" style="left:622px;top:426px;width:1px;height:30px;background:#afafaf;"></div>
<div class="b" style="left:764px;top:426px;width:1px;height:30px;background:#afafaf;"></div>
<div class="b" style="left:43px;top:457px;width:898px;height:30px;background:#a9bda2;"></div>
<div class="b" style="left:43px;top:487px;width:898px;height:1px;background:#74ae60;"></div>
<div class="b" style="left:0px;top:456px;width:41.5px;height:1px;background:#cdcdcd;"></div>
<div class="b" style="left:43px;top:488px;width:898px;height:30px;background:#c6c6c6;"></div>
<div class="b" style="left:43px;top:518px;width:898px;height:1px;background:#74ae60;"></div>
<div class="b" style="left:0px;top:487px;width:41.5px;height:1px;background:#cdcdcd;"></div>
<div class="b" style="left:151px;top:488px;width:1px;height:30px;background:#afafaf;"></div>
<div class="b" style="left:254px;top:488px;width:1px;height:30px;background:#afafaf;"></div>
<div class="b" style="left:465px;top:488px;width:1px;height:30px;background:#afafaf;"></div>
<div class="b" style="left:622px;top:488px;width:1px;height:30px;background:#afafaf;"></div>
<div class="b" style="left:764px;top:488px;width:1px;height:30px;background:#afafaf;"></div>
<div class="b" style="left:43px;top:519px;width:898px;height:30px;background:#a9bda2;"></div>
<div class="b" style="left:43px;top:549px;width:898px;height:1px;background:#74ae60;"></div>
<div class="b" style="left:0px;top:518px;width:41.5px;height:1px;background:#cdcdcd;"></div>
<div class="b" style="left:43px;top:550px;width:898px;height:30px;background:#c6c6c6;"></div>
<div class="b" style="left:43px;top:580px;width:898px;height:1px;background:#74ae60;"></div>
<div class="b" style="left:0px;top:549px;width:41.5px;height:1px;background:#cdcdcd;"></div>
<div class="b" style="left:151px;top:550px;width:1px;height:30px;background:#afafaf;"></div>
<div class="b" style="left:254px;top:550px;width:1px;height:30px;background:#afafaf;"></div>
<div class="b" style="left:465px;top:550px;width:1px;height:30px;background:#afafaf;"></div>
<div class="b" style="left:622px;top:550px;width:1px;height:30px;background:#afafaf;"></div>
<div class="b" style="left:764px;top:550px;width:1px;height:30px;background:#afafaf;"></div>
<div class="b" style="left:43px;top:581px;width:898px;height:30px;background:#a9bda2;"></div>
<div class="b" style="left:43px;top:611px;width:898px;height:1px;background:#74ae60;"></div>
<div class="b" style="left:0px;top:580px;width:41.5px;height:1px;background:#cdcdcd;"></div>
<div class="b" style="left:43px;top:612px;width:898px;height:30px;background:#c6c6c6;"></div>
<div class="b" style="left:43px;top:642px;width:898px;height:1px;background:#74ae60;"></div>
<div class="b" style="left:0px;top:611px;width:41.5px;height:1px;background:#cdcdcd;"></div>
<div class="b" style="left:151px;top:612px;width:1px;height:30px;background:#afafaf;"></div>
<div class="b" style="left:254px;top:612px;width:1px;height:30px;background:#afafaf;"></div>
<div class="b" style="left:465px;top:612px;width:1px;height:30px;background:#afafaf;"></div>
<div class="b" style="left:622px;top:612px;width:1px;height:30px;background:#afafaf;"></div>
<div class="b" style="left:764px;top:612px;width:1px;height:30px;background:#afafaf;"></div>
<div class="b" style="left:43px;top:643px;width:898px;height:30px;background:#a9bda2;"></div>
<div class="b" style="left:43px;top:673px;width:898px;height:1px;background:#74ae60;"></div>
<div class="b" style="left:0px;top:642px;width:41.5px;height:1px;background:#cdcdcd;"></div>
<div class="b" style="left:43px;top:674px;width:898px;height:30px;background:#c6c6c6;"></div>
<div class="b" style="left:43px;top:704px;width:898px;height:1px;background:#74ae60;"></div>
<div class="b" style="left:0px;top:673px;width:41.5px;height:1px;background:#cdcdcd;"></div>
<div class="b" style="left:151px;top:674px;width:1px;height:30px;background:#afafaf;"></div>
<div class="b" style="left:254px;top:674px;width:1px;height:30px;background:#afafaf;"></div>
<div class="b" style="left:465px;top:674px;width:1px;height:30px;background:#afafaf;"></div>
<div class="b" style="left:622px;top:674px;width:1px;height:30px;background:#afafaf;"></div>
<div class="b" style="left:764px;top:674px;width:1px;height:30px;background:#afafaf;"></div>
<div class="b" style="left:43px;top:705px;width:898px;height:30px;background:#a9bda2;"></div>
<div class="b" style="left:43px;top:735px;width:898px;height:1px;background:#74ae60;"></div>
<div class="b" style="left:0px;top:704px;width:41.5px;height:1px;background:#cdcdcd;"></div>
<div class="b" style="left:43px;top:736px;width:898px;height:30px;background:#c6c6c6;"></div>
<div class="b" style="left:43px;top:766px;width:898px;height:1px;background:#74ae60;"></div>
<div class="b" style="left:0px;top:735px;width:41.5px;height:1px;background:#cdcdcd;"></div>
<div class="b" style="left:151px;top:736px;width:1px;height:30px;background:#afafaf;"></div>
<div class="b" style="left:254px;top:736px;width:1px;height:30px;background:#afafaf;"></div>
<div class="b" style="left:465px;top:736px;width:1px;height:30px;background:#afafaf;"></div>
<div class="b" style="left:622px;top:736px;width:1px;height:30px;background:#afafaf;"></div>
<div class="b" style="left:764px;top:736px;width:1px;height:30px;background:#afafaf;"></div>
<div class="b" style="left:43px;top:767px;width:898px;height:30px;background:#a9bda2;"></div>
<div class="b" style="left:43px;top:797px;width:898px;height:1px;background:#74ae60;"></div>
<div class="b" style="left:0px;top:766px;width:41.5px;height:1px;background:#cdcdcd;"></div>
<div class="b" style="left:43px;top:798px;width:898px;height:30px;background:#c6c6c6;"></div>
<div class="b" style="left:43px;top:828px;width:898px;height:1px;background:#74ae60;"></div>
<div class="b" style="left:0px;top:797px;width:41.5px;height:1px;background:#cdcdcd;"></div>
<div class="b" style="left:151px;top:798px;width:1px;height:30px;background:#afafaf;"></div>
<div class="b" style="left:254px;top:798px;width:1px;height:30px;background:#afafaf;"></div>
<div class="b" style="left:465px;top:798px;width:1px;height:30px;background:#afafaf;"></div>
<div class="b" style="left:622px;top:798px;width:1px;height:30px;background:#afafaf;"></div>
<div class="b" style="left:764px;top:798px;width:1px;height:30px;background:#afafaf;"></div>
<div class="b" style="left:43px;top:829px;width:898px;height:30px;background:#a9bda2;"></div>
<div class="b" style="left:43px;top:859px;width:898px;height:1px;background:#74ae60;"></div>
<div class="b" style="left:0px;top:828px;width:41.5px;height:1px;background:#cdcdcd;"></div>
<div class="b" style="left:43px;top:860px;width:898px;height:30px;background:#c6c6c6;"></div>
<div class="b" style="left:43px;top:890px;width:898px;height:1px;background:#74ae60;"></div>
<div class="b" style="left:0px;top:859px;width:41.5px;height:1px;background:#cdcdcd;"></div>
<div class="b" style="left:151px;top:860px;width:1px;height:30px;background:#afafaf;"></div>
<div class="b" style="left:254px;top:860px;width:1px;height:30px;background:#afafaf;"></div>
<div class="b" style="left:465px;top:860px;width:1px;height:30px;background:#afafaf;"></div>
<div class="b" style="left:622px;top:860px;width:1px;height:30px;background:#afafaf;"></div>
<div class="b" style="left:764px;top:860px;width:1px;height:30px;background:#afafaf;"></div>
<div class="b" style="left:43px;top:891px;width:898px;height:30px;background:#a9bda2;"></div>
<div class="b" style="left:43px;top:921px;width:898px;height:1px;background:#74ae60;"></div>
<div class="b" style="left:0px;top:890px;width:41.5px;height:1px;background:#cdcdcd;"></div>
<div class="b" style="left:43px;top:922px;width:898px;height:30px;background:#c6c6c6;"></div>
<div class="b" style="left:43px;top:952px;width:898px;height:1px;background:#74ae60;"></div>
<div class="b" style="left:0px;top:921px;width:41.5px;height:1px;background:#cdcdcd;"></div>
<div class="b" style="left:151px;top:922px;width:1px;height:30px;background:#afafaf;"></div>
<div class="b" style="left:254px;top:922px;width:1px;height:30px;background:#afafaf;"></div>
<div class="b" style="left:465px;top:922px;width:1px;height:30px;background:#afafaf;"></div>
<div class="b" style="left:622px;top:922px;width:1px;height:30px;background:#afafaf;"></div>
<div class="b" style="left:764px;top:922px;width:1px;height:30px;background:#afafaf;"></div>
<div class="b" style="left:43px;top:953px;width:898px;height:30px;background:#a9bda2;"></div>
<div class="b" style="left:43px;top:983px;width:898px;height:1px;background:#74ae60;"></div>
<div class="b" style="left:0px;top:952px;width:41.5px;height:1px;background:#cdcdcd;"></div>
<div class="b" style="left:43px;top:984px;width:898px;height:30px;background:#c6c6c6;"></div>
<div class="b" style="left:43px;top:1014px;width:898px;height:1px;background:#74ae60;"></div>
<div class="b" style="left:0px;top:983px;width:41.5px;height:1px;background:#cdcdcd;"></div>
<div class="b" style="left:151px;top:984px;width:1px;height:30px;background:#afafaf;"></div>
<div class="b" style="left:254px;top:984px;width:1px;height:30px;background:#afafaf;"></div>
<div class="b" style="left:465px;top:984px;width:1px;height:30px;background:#afafaf;"></div>
<div class="b" style="left:622px;top:984px;width:1px;height:30px;background:#afafaf;"></div>
<div class="b" style="left:764px;top:984px;width:1px;height:30px;background:#afafaf;"></div>
<div class="b" style="left:41px;top:300px;width:901px;height:2px;background:#176c3e;"></div>
<div class="b" style="left:41px;top:300px;width:2px;height:730px;background:#176c3e;"></div>
<div class="b" style="left:940px;top:300px;width:2px;height:730px;background:#176c3e;"></div>
<div class="b" style="left:43px;top:302px;width:897px;height:1px;background:#fbfbfb;"></div>
<div class="b" style="left:43px;top:302px;width:1px;height:730px;background:#fbfbfb;"></div>
<div class="b" style="left:939px;top:302px;width:1px;height:730px;background:#fbfbfb;"></div>
<span class="t" style="left:14.41px;top:305.80px;font-size:21.2px;line-height:23px;letter-spacing:0.000px;color:#1e7145;-webkit-text-stroke:.25px #e2e2e2;">1</span>
<span class="t" style="left:14.70px;top:336.80px;font-size:21.2px;line-height:23px;letter-spacing:0.000px;color:#1e7145;-webkit-text-stroke:.25px #e2e2e2;">2</span>
<span class="t" style="left:14.77px;top:367.80px;font-size:21.2px;line-height:23px;letter-spacing:0.000px;color:#1e7145;-webkit-text-stroke:.25px #e2e2e2;">3</span>
<span class="t" style="left:14.77px;top:398.80px;font-size:21.2px;line-height:23px;letter-spacing:0.000px;color:#1e7145;-webkit-text-stroke:.25px #e2e2e2;">4</span>
<span class="t" style="left:14.73px;top:429.80px;font-size:21.2px;line-height:23px;letter-spacing:0.000px;color:#1e7145;-webkit-text-stroke:.25px #e2e2e2;">5</span>
<span class="t" style="left:14.63px;top:460.80px;font-size:21.2px;line-height:23px;letter-spacing:0.000px;color:#1e7145;-webkit-text-stroke:.25px #e2e2e2;">6</span>
<span class="t" style="left:14.69px;top:491.80px;font-size:21.2px;line-height:23px;letter-spacing:0.000px;color:#1e7145;-webkit-text-stroke:.25px #e2e2e2;">7</span>
<span class="t" style="left:14.70px;top:522.80px;font-size:21.2px;line-height:23px;letter-spacing:0.000px;color:#1e7145;-webkit-text-stroke:.25px #e2e2e2;">8</span>
<span class="t" style="left:14.71px;top:553.80px;font-size:21.2px;line-height:23px;letter-spacing:0.000px;color:#1e7145;-webkit-text-stroke:.25px #e2e2e2;">9</span>
<span class="t" style="left:9.02px;top:584.80px;font-size:21.2px;line-height:23px;letter-spacing:-0.200px;color:#1e7145;-webkit-text-stroke:.25px #e2e2e2;">10</span>
<span class="t" style="left:9.12px;top:615.80px;font-size:21.2px;line-height:23px;letter-spacing:-0.200px;color:#1e7145;-webkit-text-stroke:.25px #e2e2e2;">11</span>
<span class="t" style="left:9.14px;top:646.80px;font-size:21.2px;line-height:23px;letter-spacing:-0.200px;color:#1e7145;-webkit-text-stroke:.25px #e2e2e2;">12</span>
<span class="t" style="left:9.07px;top:677.80px;font-size:21.2px;line-height:23px;letter-spacing:-0.200px;color:#1e7145;-webkit-text-stroke:.25px #e2e2e2;">13</span>
<span class="t" style="left:8.91px;top:708.80px;font-size:21.2px;line-height:23px;letter-spacing:-0.200px;color:#1e7145;-webkit-text-stroke:.25px #e2e2e2;">14</span>
<span class="t" style="left:9.05px;top:739.80px;font-size:21.2px;line-height:23px;letter-spacing:-0.200px;color:#1e7145;-webkit-text-stroke:.25px #e2e2e2;">15</span>
<span class="t" style="left:9.07px;top:770.80px;font-size:21.2px;line-height:23px;letter-spacing:-0.200px;color:#1e7145;-webkit-text-stroke:.25px #e2e2e2;">16</span>
<span class="t" style="left:9.14px;top:801.80px;font-size:21.2px;line-height:23px;letter-spacing:-0.200px;color:#1e7145;-webkit-text-stroke:.25px #e2e2e2;">17</span>
<span class="t" style="left:9.06px;top:832.80px;font-size:21.2px;line-height:23px;letter-spacing:-0.200px;color:#1e7145;-webkit-text-stroke:.25px #e2e2e2;">18</span>
<span class="t" style="left:9.10px;top:863.80px;font-size:21.2px;line-height:23px;letter-spacing:-0.200px;color:#1e7145;-webkit-text-stroke:.25px #e2e2e2;">19</span>
<span class="t" style="left:9.29px;top:894.80px;font-size:21.2px;line-height:23px;letter-spacing:-0.200px;color:#1e7145;-webkit-text-stroke:.25px #e2e2e2;">20</span>
<span class="t" style="left:9.39px;top:925.80px;font-size:21.2px;line-height:23px;letter-spacing:-0.200px;color:#1e7145;-webkit-text-stroke:.25px #e2e2e2;">21</span>
<span class="t" style="left:9.41px;top:956.80px;font-size:21.2px;line-height:23px;letter-spacing:-0.200px;color:#1e7145;-webkit-text-stroke:.25px #e2e2e2;">22</span>
<span class="t" style="left:9.34px;top:987.80px;font-size:21.2px;line-height:23px;letter-spacing:-0.200px;color:#1e7145;-webkit-text-stroke:.25px #e2e2e2;">23</span>
<span class="t" style="left:45.80px;top:305.80px;font-size:21px;line-height:23px;letter-spacing:0.602px;color:#ffffff;font-weight:700;-webkit-text-stroke:.25px #4ea72e;">Date</span>
<span class="t" style="left:155.20px;top:305.80px;font-size:21px;line-height:23px;letter-spacing:-0.591px;color:#d6d6d6;font-weight:700;-webkit-text-stroke:.25px #3d8425;">Region</span>
<span class="t" style="left:257.80px;top:305.80px;font-size:21px;line-height:23px;letter-spacing:-0.301px;color:#d6d6d6;font-weight:700;-webkit-text-stroke:.25px #3d8425;">Product_Category</span>
<span class="t" style="left:469.10px;top:305.80px;font-size:21px;line-height:23px;letter-spacing:-0.069px;color:#d6d6d6;font-weight:700;-webkit-text-stroke:.25px #3d8425;">Salesperson</span>
<span class="t" style="left:625.94px;top:305.80px;font-size:21px;line-height:23px;letter-spacing:-0.137px;color:#d6d6d6;font-weight:700;-webkit-text-stroke:.25px #3d8425;">Units_Sold</span>
<span class="t" style="left:767.90px;top:305.80px;font-size:21px;line-height:23px;letter-spacing:-0.319px;color:#d6d6d6;font-weight:700;-webkit-text-stroke:.25px #3d8425;">Sales_Amount</span>
<div class="b" style="left:130.2px;top:310.2px;width:20.7px;height:20.6px;background:linear-gradient(#ffffff,#f4f4f6 55%,#e4e4e8);border:1px solid #b4b4c0;"></div>
<svg class="b" style="left:136.6px;top:318.59999999999997px;" width="8" height="5" viewBox="0 0 8 5"><path d="M0.4 0.4 H7.6 L4 4.4 Z" fill="#4f4f4f"/></svg>
<div class="b" style="left:233.2px;top:310.2px;width:20.7px;height:20.6px;background:linear-gradient(#cbcbcb,#c0c0c2 55%,#b0b0b4);border:1px solid #8f8f9b;"></div>
<svg class="b" style="left:239.6px;top:318.59999999999997px;" width="8" height="5" viewBox="0 0 8 5"><path d="M0.4 0.4 H7.6 L4 4.4 Z" fill="#4f4f4f"/></svg>
<div class="b" style="left:444.2px;top:310.2px;width:20.7px;height:20.6px;background:linear-gradient(#cbcbcb,#c0c0c2 55%,#b0b0b4);border:1px solid #8f8f9b;"></div>
<svg class="b" style="left:450.59999999999997px;top:318.59999999999997px;" width="8" height="5" viewBox="0 0 8 5"><path d="M0.4 0.4 H7.6 L4 4.4 Z" fill="#4f4f4f"/></svg>
<div class="b" style="left:601.2px;top:310.2px;width:20.7px;height:20.6px;background:linear-gradient(#cbcbcb,#c0c0c2 55%,#b0b0b4);border:1px solid #8f8f9b;"></div>
<svg class="b" style="left:607.6px;top:318.59999999999997px;" width="8" height="5" viewBox="0 0 8 5"><path d="M0.4 0.4 H7.6 L4 4.4 Z" fill="#4f4f4f"/></svg>
<div class="b" style="left:743.2px;top:310.2px;width:20.7px;height:20.6px;background:linear-gradient(#cbcbcb,#c0c0c2 55%,#b0b0b4);border:1px solid #8f8f9b;"></div>
<svg class="b" style="left:749.6px;top:318.59999999999997px;" width="8" height="5" viewBox="0 0 8 5"><path d="M0.4 0.4 H7.6 L4 4.4 Z" fill="#4f4f4f"/></svg>
<div class="b" style="left:918.6px;top:310.2px;width:20.7px;height:20.6px;background:linear-gradient(#cbcbcb,#c0c0c2 55%,#b0b0b4);border:1px solid #8f8f9b;"></div>
<svg class="b" style="left:925.0px;top:318.59999999999997px;" width="8" height="5" viewBox="0 0 8 5"><path d="M0.4 0.4 H7.6 L4 4.4 Z" fill="#4f4f4f"/></svg>
<span class="t" style="left:59.69px;top:336.60px;font-size:21.2px;line-height:23px;letter-spacing:0.830px;color:#000;-webkit-text-stroke:.2px #a9bda2;">1/5/2024</span>
<span class="t" style="left:154.26px;top:336.60px;font-size:21.2px;line-height:23px;letter-spacing:0.644px;color:#000;-webkit-text-stroke:.2px #a9bda2;">North</span>
<span class="t" style="left:257.16px;top:336.60px;font-size:21.2px;line-height:23px;letter-spacing:0.502px;color:#000;-webkit-text-stroke:.2px #a9bda2;">Electronics</span>
<span class="t" style="left:468.57px;top:336.60px;font-size:21.2px;line-height:23px;letter-spacing:-0.372px;color:#000;-webkit-text-stroke:.2px #a9bda2;">John Smith</span>
<span class="t" style="left:737.09px;top:336.60px;font-size:21.2px;line-height:23px;letter-spacing:0.924px;color:#000;-webkit-text-stroke:.2px #a9bda2;">15</span>
<span class="t" style="left:888.79px;top:336.60px;font-size:21.2px;line-height:23px;letter-spacing:0.458px;color:#000;-webkit-text-stroke:.2px #a9bda2;">3750</span>
<span class="t" style="left:59.69px;top:367.60px;font-size:21.2px;line-height:23px;letter-spacing:0.830px;color:#000;-webkit-text-stroke:.2px #c6c6c6;">1/5/2024</span>
<span class="t" style="left:154.64px;top:367.60px;font-size:21.2px;line-height:23px;letter-spacing:0.084px;color:#000;-webkit-text-stroke:.2px #c6c6c6;">South</span>
<span class="t" style="left:257.32px;top:367.60px;font-size:21.2px;line-height:23px;letter-spacing:0.594px;color:#000;-webkit-text-stroke:.2px #c6c6c6;">Clothing</span>
<span class="t" style="left:468.34px;top:367.60px;font-size:21.2px;line-height:23px;letter-spacing:-0.373px;color:#000;-webkit-text-stroke:.2px #c6c6c6;">Sarah Johnson</span>
<span class="t" style="left:737.63px;top:367.60px;font-size:21.2px;line-height:23px;letter-spacing:0.417px;color:#000;-webkit-text-stroke:.2px #c6c6c6;">23</span>
<span class="t" style="left:888.53px;top:367.60px;font-size:21.2px;line-height:23px;letter-spacing:0.544px;color:#000;-webkit-text-stroke:.2px #c6c6c6;">2300</span>
<span class="t" style="left:59.69px;top:398.60px;font-size:21.2px;line-height:23px;letter-spacing:0.830px;color:#000;-webkit-text-stroke:.2px #a9bda2;">1/5/2024</span>
<span class="t" style="left:154.26px;top:398.60px;font-size:21.2px;line-height:23px;letter-spacing:0.058px;color:#000;-webkit-text-stroke:.2px #a9bda2;">East</span>
<span class="t" style="left:257.16px;top:398.60px;font-size:21.2px;line-height:23px;letter-spacing:0.003px;color:#000;-webkit-text-stroke:.2px #a9bda2;">Home &amp; Garden</span>
<span class="t" style="left:468.16px;top:398.60px;font-size:21.2px;line-height:23px;letter-spacing:0.226px;color:#000;-webkit-text-stroke:.2px #a9bda2;">Mike Wilson</span>
<span class="t" style="left:737.09px;top:398.60px;font-size:21.2px;line-height:23px;letter-spacing:1.100px;color:#000;-webkit-text-stroke:.2px #a9bda2;">12</span>
<span class="t" style="left:887.99px;top:398.60px;font-size:21.2px;line-height:23px;letter-spacing:0.727px;color:#000;-webkit-text-stroke:.2px #a9bda2;">1800</span>
<span class="t" style="left:59.69px;top:429.60px;font-size:21.2px;line-height:23px;letter-spacing:0.830px;color:#000;-webkit-text-stroke:.2px #c6c6c6;">1/5/2024</span>
<span class="t" style="left:155.31px;top:429.60px;font-size:21.2px;line-height:23px;letter-spacing:0.419px;color:#000;-webkit-text-stroke:.2px #c6c6c6;">West</span>
<span class="t" style="left:257.44px;top:429.60px;font-size:21.2px;line-height:23px;letter-spacing:0.012px;color:#000;-webkit-text-stroke:.2px #c6c6c6;">Sports</span>
<span class="t" style="left:468.16px;top:429.60px;font-size:21.2px;line-height:23px;letter-spacing:-0.084px;color:#000;-webkit-text-stroke:.2px #c6c6c6;">Lisa Brown</span>
<span class="t" style="left:737.09px;top:429.60px;font-size:21.2px;line-height:23px;letter-spacing:0.955px;color:#000;-webkit-text-stroke:.2px #c6c6c6;">18</span>
<span class="t" style="left:888.53px;top:429.60px;font-size:21.2px;line-height:23px;letter-spacing:0.544px;color:#000;-webkit-text-stroke:.2px #c6c6c6;">2160</span>
<span class="t" style="left:47.24px;top:460.60px;font-size:21.2px;line-height:23px;letter-spacing:0.809px;color:#000;-webkit-text-stroke:.2px #a9bda2;">1/12/2024</span>
<span class="t" style="left:154.26px;top:460.60px;font-size:21.2px;line-height:23px;letter-spacing:0.644px;color:#000;-webkit-text-stroke:.2px #a9bda2;">North</span>
<span class="t" style="left:257.32px;top:460.60px;font-size:21.2px;line-height:23px;letter-spacing:0.594px;color:#000;-webkit-text-stroke:.2px #a9bda2;">Clothing</span>
<span class="t" style="left:468.57px;top:460.60px;font-size:21.2px;line-height:23px;letter-spacing:-0.372px;color:#000;-webkit-text-stroke:.2px #a9bda2;">John Smith</span>
<span class="t" style="left:737.89px;top:460.60px;font-size:21.2px;line-height:23px;letter-spacing:0.262px;color:#000;-webkit-text-stroke:.2px #a9bda2;">31</span>
<span class="t" style="left:888.79px;top:460.60px;font-size:21.2px;line-height:23px;letter-spacing:0.458px;color:#000;-webkit-text-stroke:.2px #a9bda2;">3100</span>
<span class="t" style="left:47.24px;top:491.60px;font-size:21.2px;line-height:23px;letter-spacing:0.809px;color:#000;-webkit-text-stroke:.2px #c6c6c6;">1/12/2024</span>
<span class="t" style="left:154.64px;top:491.60px;font-size:21.2px;line-height:23px;letter-spacing:0.084px;color:#000;-webkit-text-stroke:.2px #c6c6c6;">South</span>
<span class="t" style="left:257.16px;top:491.60px;font-size:21.2px;line-height:23px;letter-spacing:0.502px;color:#000;-webkit-text-stroke:.2px #c6c6c6;">Electronics</span>
<span class="t" style="left:468.34px;top:491.60px;font-size:21.2px;line-height:23px;letter-spacing:-0.373px;color:#000;-webkit-text-stroke:.2px #c6c6c6;">Sarah Johnson</span>
<span class="t" style="left:750.23px;top:491.60px;font-size:21.2px;line-height:23px;letter-spacing:0.000px;color:#000;-webkit-text-stroke:.2px #c6c6c6;">8</span>
<span class="t" style="left:888.53px;top:491.60px;font-size:21.2px;line-height:23px;letter-spacing:0.544px;color:#000;-webkit-text-stroke:.2px #c6c6c6;">2400</span>
<span class="t" style="left:47.24px;top:522.60px;font-size:21.2px;line-height:23px;letter-spacing:0.809px;color:#000;-webkit-text-stroke:.2px #a9bda2;">1/12/2024</span>
<span class="t" style="left:154.26px;top:522.60px;font-size:21.2px;line-height:23px;letter-spacing:0.058px;color:#000;-webkit-text-stroke:.2px #a9bda2;">East</span>
<span class="t" style="left:257.44px;top:522.60px;font-size:21.2px;line-height:23px;letter-spacing:0.012px;color:#000;-webkit-text-stroke:.2px #a9bda2;">Sports</span>
<span class="t" style="left:468.16px;top:522.60px;font-size:21.2px;line-height:23px;letter-spacing:0.226px;color:#000;-webkit-text-stroke:.2px #a9bda2;">Mike Wilson</span>
<span class="t" style="left:737.63px;top:522.60px;font-size:21.2px;line-height:23px;letter-spacing:0.376px;color:#000;-webkit-text-stroke:.2px #a9bda2;">25</span>
<span class="t" style="left:888.79px;top:522.60px;font-size:21.2px;line-height:23px;letter-spacing:0.458px;color:#000;-webkit-text-stroke:.2px #a9bda2;">3000</span>
<span class="t" style="left:47.24px;top:553.60px;font-size:21.2px;line-height:23px;letter-spacing:0.809px;color:#000;-webkit-text-stroke:.2px #c6c6c6;">1/12/2024</span>
<span class="t" style="left:155.31px;top:553.60px;font-size:21.2px;line-height:23px;letter-spacing:0.419px;color:#000;-webkit-text-stroke:.2px #c6c6c6;">West</span>
<span class="t" style="left:257.16px;top:553.60px;font-size:21.2px;line-height:23px;letter-spacing:0.003px;color:#000;-webkit-text-stroke:.2px #c6c6c6;">Home &amp; Garden</span>
<span class="t" style="left:468.16px;top:553.60px;font-size:21.2px;line-height:23px;letter-spacing:-0.084px;color:#000;-webkit-text-stroke:.2px #c6c6c6;">Lisa Brown</span>
<span class="t" style="left:737.09px;top:553.60px;font-size:21.2px;line-height:23px;letter-spacing:0.655px;color:#000;-webkit-text-stroke:.2px #c6c6c6;">14</span>
<span class="t" style="left:888.53px;top:553.60px;font-size:21.2px;line-height:23px;letter-spacing:0.544px;color:#000;-webkit-text-stroke:.2px #c6c6c6;">2100</span>
<span class="t" style="left:60.23px;top:584.60px;font-size:21.2px;line-height:23px;letter-spacing:0.752px;color:#000;-webkit-text-stroke:.2px #a9bda2;">2/3/2024</span>
<span class="t" style="left:154.26px;top:584.60px;font-size:21.2px;line-height:23px;letter-spacing:0.644px;color:#000;-webkit-text-stroke:.2px #a9bda2;">North</span>
<span class="t" style="left:257.44px;top:584.60px;font-size:21.2px;line-height:23px;letter-spacing:0.012px;color:#000;-webkit-text-stroke:.2px #a9bda2;">Sports</span>
<span class="t" style="left:468.57px;top:584.60px;font-size:21.2px;line-height:23px;letter-spacing:-0.372px;color:#000;-webkit-text-stroke:.2px #a9bda2;">John Smith</span>
<span class="t" style="left:737.63px;top:584.60px;font-size:21.2px;line-height:23px;letter-spacing:0.552px;color:#000;-webkit-text-stroke:.2px #a9bda2;">22</span>
<span class="t" style="left:888.53px;top:584.60px;font-size:21.2px;line-height:23px;letter-spacing:0.544px;color:#000;-webkit-text-stroke:.2px #a9bda2;">2640</span>
<span class="t" style="left:60.23px;top:615.60px;font-size:21.2px;line-height:23px;letter-spacing:0.752px;color:#000;-webkit-text-stroke:.2px #c6c6c6;">2/3/2024</span>
<span class="t" style="left:154.64px;top:615.60px;font-size:21.2px;line-height:23px;letter-spacing:0.084px;color:#000;-webkit-text-stroke:.2px #c6c6c6;">South</span>
<span class="t" style="left:257.16px;top:615.60px;font-size:21.2px;line-height:23px;letter-spacing:0.003px;color:#000;-webkit-text-stroke:.2px #c6c6c6;">Home &amp; Garden</span>
<span class="t" style="left:468.34px;top:615.60px;font-size:21.2px;line-height:23px;letter-spacing:-0.373px;color:#000;-webkit-text-stroke:.2px #c6c6c6;">Sarah Johnson</span>
<span class="t" style="left:737.09px;top:615.60px;font-size:21.2px;line-height:23px;letter-spacing:1.038px;color:#000;-webkit-text-stroke:.2px #c6c6c6;">19</span>
<span class="t" style="left:888.53px;top:615.60px;font-size:21.2px;line-height:23px;letter-spacing:0.544px;color:#000;-webkit-text-stroke:.2px #c6c6c6;">2850</span>
<span class="t" style="left:60.23px;top:646.60px;font-size:21.2px;line-height:23px;letter-spacing:0.752px;color:#000;-webkit-text-stroke:.2px #a9bda2;">2/3/2024</span>
<span class="t" style="left:154.26px;top:646.60px;font-size:21.2px;line-height:23px;letter-spacing:0.058px;color:#000;-webkit-text-stroke:.2px #a9bda2;">East</span>
<span class="t" style="left:257.16px;top:646.60px;font-size:21.2px;line-height:23px;letter-spacing:0.502px;color:#000;-webkit-text-stroke:.2px #a9bda2;">Electronics</span>
<span class="t" style="left:468.16px;top:646.60px;font-size:21.2px;line-height:23px;letter-spacing:0.226px;color:#000;-webkit-text-stroke:.2px #a9bda2;">Mike Wilson</span>
<span class="t" style="left:737.09px;top:646.60px;font-size:21.2px;line-height:23px;letter-spacing:1.069px;color:#000;-webkit-text-stroke:.2px #a9bda2;">11</span>
<span class="t" style="left:888.79px;top:646.60px;font-size:21.2px;line-height:23px;letter-spacing:0.458px;color:#000;-webkit-text-stroke:.2px #a9bda2;">3300</span>
<span class="t" style="left:60.23px;top:677.60px;font-size:21.2px;line-height:23px;letter-spacing:0.752px;color:#000;-webkit-text-stroke:.2px #c6c6c6;">2/3/2024</span>
<span class="t" style="left:155.31px;top:677.60px;font-size:21.2px;line-height:23px;letter-spacing:0.419px;color:#000;-webkit-text-stroke:.2px #c6c6c6;">West</span>
<span class="t" style="left:257.32px;top:677.60px;font-size:21.2px;line-height:23px;letter-spacing:0.594px;color:#000;-webkit-text-stroke:.2px #c6c6c6;">Clothing</span>
<span class="t" style="left:468.16px;top:677.60px;font-size:21.2px;line-height:23px;letter-spacing:-0.084px;color:#000;-webkit-text-stroke:.2px #c6c6c6;">Lisa Brown</span>
<span class="t" style="left:737.63px;top:677.60px;font-size:21.2px;line-height:23px;letter-spacing:0.407px;color:#000;-webkit-text-stroke:.2px #c6c6c6;">28</span>
<span class="t" style="left:888.53px;top:677.60px;font-size:21.2px;line-height:23px;letter-spacing:0.544px;color:#000;-webkit-text-stroke:.2px #c6c6c6;">2800</span>
<span class="t" style="left:47.78px;top:708.60px;font-size:21.2px;line-height:23px;letter-spacing:0.741px;color:#000;-webkit-text-stroke:.2px #a9bda2;">2/17/2024</span>
<span class="t" style="left:154.26px;top:708.60px;font-size:21.2px;line-height:23px;letter-spacing:0.644px;color:#000;-webkit-text-stroke:.2px #a9bda2;">North</span>
<span class="t" style="left:257.16px;top:708.60px;font-size:21.2px;line-height:23px;letter-spacing:0.003px;color:#000;-webkit-text-stroke:.2px #a9bda2;">Home &amp; Garden</span>
<span class="t" style="left:468.16px;top:708.60px;font-size:21.2px;line-height:23px;letter-spacing:-0.028px;color:#000;-webkit-text-stroke:.2px #a9bda2;">David Chen</span>
<span class="t" style="left:737.09px;top:708.60px;font-size:21.2px;line-height:23px;letter-spacing:0.966px;color:#000;-webkit-text-stroke:.2px #a9bda2;">16</span>
<span class="t" style="left:888.53px;top:708.60px;font-size:21.2px;line-height:23px;letter-spacing:0.544px;color:#000;-webkit-text-stroke:.2px #a9bda2;">2400</span>
<span class="t" style="left:47.78px;top:739.60px;font-size:21.2px;line-height:23px;letter-spacing:0.741px;color:#000;-webkit-text-stroke:.2px #c6c6c6;">2/17/2024</span>
<span class="t" style="left:154.64px;top:739.60px;font-size:21.2px;line-height:23px;letter-spacing:0.084px;color:#000;-webkit-text-stroke:.2px #c6c6c6;">South</span>
<span class="t" style="left:257.44px;top:739.60px;font-size:21.2px;line-height:23px;letter-spacing:0.012px;color:#000;-webkit-text-stroke:.2px #c6c6c6;">Sports</span>
<span class="t" style="left:468.16px;top:739.60px;font-size:21.2px;line-height:23px;letter-spacing:-0.083px;color:#000;-webkit-text-stroke:.2px #c6c6c6;">Emma Davis</span>
<span class="t" style="left:737.89px;top:739.60px;font-size:21.2px;line-height:23px;letter-spacing:0.158px;color:#000;-webkit-text-stroke:.2px #c6c6c6;">33</span>
<span class="t" style="left:888.79px;top:739.60px;font-size:21.2px;line-height:23px;letter-spacing:0.458px;color:#000;-webkit-text-stroke:.2px #c6c6c6;">3960</span>
<span class="t" style="left:47.78px;top:770.60px;font-size:21.2px;line-height:23px;letter-spacing:0.741px;color:#000;-webkit-text-stroke:.2px #a9bda2;">2/17/2024</span>
<span class="t" style="left:154.26px;top:770.60px;font-size:21.2px;line-height:23px;letter-spacing:0.058px;color:#000;-webkit-text-stroke:.2px #a9bda2;">East</span>
<span class="t" style="left:257.32px;top:770.60px;font-size:21.2px;line-height:23px;letter-spacing:0.594px;color:#000;-webkit-text-stroke:.2px #a9bda2;">Clothing</span>
<span class="t" style="left:468.16px;top:770.60px;font-size:21.2px;line-height:23px;letter-spacing:0.226px;color:#000;-webkit-text-stroke:.2px #a9bda2;">Mike Wilson</span>
<span class="t" style="left:737.63px;top:770.60px;font-size:21.2px;line-height:23px;letter-spacing:0.489px;color:#000;-webkit-text-stroke:.2px #a9bda2;">29</span>
<span class="t" style="left:888.53px;top:770.60px;font-size:21.2px;line-height:23px;letter-spacing:0.544px;color:#000;-webkit-text-stroke:.2px #a9bda2;">2900</span>
<span class="t" style="left:47.78px;top:801.60px;font-size:21.2px;line-height:23px;letter-spacing:0.741px;color:#000;-webkit-text-stroke:.2px #c6c6c6;">2/17/2024</span>
<span class="t" style="left:155.31px;top:801.60px;font-size:21.2px;line-height:23px;letter-spacing:0.419px;color:#000;-webkit-text-stroke:.2px #c6c6c6;">West</span>
<span class="t" style="left:257.16px;top:801.60px;font-size:21.2px;line-height:23px;letter-spacing:0.502px;color:#000;-webkit-text-stroke:.2px #c6c6c6;">Electronics</span>
<span class="t" style="left:468.16px;top:801.60px;font-size:21.2px;line-height:23px;letter-spacing:-0.084px;color:#000;-webkit-text-stroke:.2px #c6c6c6;">Lisa Brown</span>
<span class="t" style="left:750.06px;top:801.60px;font-size:21.2px;line-height:23px;letter-spacing:0.000px;color:#000;-webkit-text-stroke:.2px #c6c6c6;">7</span>
<span class="t" style="left:888.53px;top:801.60px;font-size:21.2px;line-height:23px;letter-spacing:0.544px;color:#000;-webkit-text-stroke:.2px #c6c6c6;">2100</span>
<span class="t" style="left:60.49px;top:832.60px;font-size:21.2px;line-height:23px;letter-spacing:0.715px;color:#000;-webkit-text-stroke:.2px #a9bda2;">3/8/2024</span>
<span class="t" style="left:154.26px;top:832.60px;font-size:21.2px;line-height:23px;letter-spacing:0.644px;color:#000;-webkit-text-stroke:.2px #a9bda2;">North</span>
<span class="t" style="left:257.16px;top:832.60px;font-size:21.2px;line-height:23px;letter-spacing:0.502px;color:#000;-webkit-text-stroke:.2px #a9bda2;">Electronics</span>
<span class="t" style="left:468.16px;top:832.60px;font-size:21.2px;line-height:23px;letter-spacing:-0.028px;color:#000;-webkit-text-stroke:.2px #a9bda2;">David Chen</span>
<span class="t" style="left:737.63px;top:832.60px;font-size:21.2px;line-height:23px;letter-spacing:0.106px;color:#000;-webkit-text-stroke:.2px #a9bda2;">24</span>
<span class="t" style="left:888.52px;top:832.60px;font-size:21.2px;line-height:23px;letter-spacing:0.548px;color:#000;-webkit-text-stroke:.2px #a9bda2;">6000</span>
<span class="t" style="left:60.49px;top:863.60px;font-size:21.2px;line-height:23px;letter-spacing:0.715px;color:#000;-webkit-text-stroke:.2px #c6c6c6;">3/8/2024</span>
<span class="t" style="left:154.64px;top:863.60px;font-size:21.2px;line-height:23px;letter-spacing:0.084px;color:#000;-webkit-text-stroke:.2px #c6c6c6;">South</span>
<span class="t" style="left:257.32px;top:863.60px;font-size:21.2px;line-height:23px;letter-spacing:0.594px;color:#000;-webkit-text-stroke:.2px #c6c6c6;">Clothing</span>
<span class="t" style="left:468.16px;top:863.60px;font-size:21.2px;line-height:23px;letter-spacing:-0.083px;color:#000;-webkit-text-stroke:.2px #c6c6c6;">Emma Davis</span>
<span class="t" style="left:737.89px;top:863.60px;font-size:21.2px;line-height:23px;letter-spacing:0.117px;color:#000;-webkit-text-stroke:.2px #c6c6c6;">35</span>
<span class="t" style="left:888.79px;top:863.60px;font-size:21.2px;line-height:23px;letter-spacing:0.458px;color:#000;-webkit-text-stroke:.2px #c6c6c6;">3500</span>
<span class="t" style="left:60.49px;top:894.60px;font-size:21.2px;line-height:23px;letter-spacing:0.715px;color:#000;-webkit-text-stroke:.2px #a9bda2;">3/8/2024</span>
<span class="t" style="left:154.26px;top:894.60px;font-size:21.2px;line-height:23px;letter-spacing:0.058px;color:#000;-webkit-text-stroke:.2px #a9bda2;">East</span>
<span class="t" style="left:257.16px;top:894.60px;font-size:21.2px;line-height:23px;letter-spacing:0.003px;color:#000;-webkit-text-stroke:.2px #a9bda2;">Home &amp; Garden</span>
<span class="t" style="left:468.82px;top:894.60px;font-size:21.2px;line-height:23px;letter-spacing:-0.466px;color:#000;-webkit-text-stroke:.2px #a9bda2;">Tom Rodriguez</span>
<span class="t" style="left:737.63px;top:894.60px;font-size:21.2px;line-height:23px;letter-spacing:0.521px;color:#000;-webkit-text-stroke:.2px #a9bda2;">21</span>
<span class="t" style="left:888.79px;top:894.60px;font-size:21.2px;line-height:23px;letter-spacing:0.458px;color:#000;-webkit-text-stroke:.2px #a9bda2;">3150</span>
<span class="t" style="left:60.49px;top:925.60px;font-size:21.2px;line-height:23px;letter-spacing:0.715px;color:#000;-webkit-text-stroke:.2px #c6c6c6;">3/8/2024</span>
<span class="t" style="left:155.31px;top:925.60px;font-size:21.2px;line-height:23px;letter-spacing:0.419px;color:#000;-webkit-text-stroke:.2px #c6c6c6;">West</span>
<span class="t" style="left:257.44px;top:925.60px;font-size:21.2px;line-height:23px;letter-spacing:0.012px;color:#000;-webkit-text-stroke:.2px #c6c6c6;">Sports</span>
<span class="t" style="left:468.16px;top:925.60px;font-size:21.2px;line-height:23px;letter-spacing:-0.084px;color:#000;-webkit-text-stroke:.2px #c6c6c6;">Lisa Brown</span>
<span class="t" style="left:737.63px;top:925.60px;font-size:21.2px;line-height:23px;letter-spacing:0.552px;color:#000;-webkit-text-stroke:.2px #c6c6c6;">27</span>
<span class="t" style="left:888.79px;top:925.60px;font-size:21.2px;line-height:23px;letter-spacing:0.458px;color:#000;-webkit-text-stroke:.2px #c6c6c6;">3240</span>
<span class="t" style="left:48.04px;top:956.60px;font-size:21.2px;line-height:23px;letter-spacing:0.708px;color:#000;-webkit-text-stroke:.2px #a9bda2;">3/22/2024</span>
<span class="t" style="left:154.26px;top:956.60px;font-size:21.2px;line-height:23px;letter-spacing:0.644px;color:#000;-webkit-text-stroke:.2px #a9bda2;">North</span>
<span class="t" style="left:257.32px;top:956.60px;font-size:21.2px;line-height:23px;letter-spacing:0.594px;color:#000;-webkit-text-stroke:.2px #a9bda2;">Clothing</span>
<span class="t" style="left:468.16px;top:956.60px;font-size:21.2px;line-height:23px;letter-spacing:-0.028px;color:#000;-webkit-text-stroke:.2px #a9bda2;">David Chen</span>
<span class="t" style="left:738.21px;top:956.60px;font-size:21.2px;line-height:23px;letter-spacing:-0.028px;color:#000;-webkit-text-stroke:.2px #a9bda2;">42</span>
<span class="t" style="left:889.11px;top:956.60px;font-size:21.2px;line-height:23px;letter-spacing:0.351px;color:#000;-webkit-text-stroke:.2px #a9bda2;">4200</span>
<span class="t" style="left:48.04px;top:987.60px;font-size:21.2px;line-height:23px;letter-spacing:0.708px;color:#000;-webkit-text-stroke:.2px #c6c6c6;">3/22/2024</span>
<span class="t" style="left:154.64px;top:987.60px;font-size:21.2px;line-height:23px;letter-spacing:0.084px;color:#000;-webkit-text-stroke:.2px #c6c6c6;">South</span>
<span class="t" style="left:257.16px;top:987.60px;font-size:21.2px;line-height:23px;letter-spacing:0.502px;color:#000;-webkit-text-stroke:.2px #c6c6c6;">Electronics</span>
<span class="t" style="left:468.16px;top:987.60px;font-size:21.2px;line-height:23px;letter-spacing:-0.083px;color:#000;-webkit-text-stroke:.2px #c6c6c6;">Emma Davis</span>
<span class="t" style="left:737.09px;top:987.60px;font-size:21.2px;line-height:23px;letter-spacing:0.966px;color:#000;-webkit-text-stroke:.2px #c6c6c6;">13</span>
<span class="t" style="left:888.79px;top:987.60px;font-size:21.2px;line-height:23px;letter-spacing:0.458px;color:#000;-webkit-text-stroke:.2px #c6c6c6;">3900</span>
<div class="b" style="left:0px;top:1011.8px;width:1358px;height:7px;background:#fff;"></div>
<div class="b" style="left:-5px;top:1013px;width:228.6px;height:10px;background:#ececec;border-radius:0 5px 0 0;"></div>
<div class="b" style="left:298.4px;top:1013px;width:1100px;height:10px;background:#ececec;border-radius:5px 0 0 0;"></div>
</main>
<div id="pivotchart-menu" role="menu">
<div class="b" style="left:1012.3px;top:198.3px;width:235.8px;height:75.5px;background:#fff;border:1px solid #7d7d7d;border-radius:6px;box-shadow:0 6px 16px rgba(0,0,0,.20),0 2px 5px rgba(0,0,0,.14);"></div>
<svg class="b" style="left:1027px;top:205px;" width="22" height="22" viewBox="0 0 22 22">
<rect x="1.6" y="1.6" width="19" height="19" fill="#f4f4f4" stroke="#555" stroke-width="1.2"/>
<rect x="4.2" y="4" width="2.6" height="2.6" fill="#c8c6c4" stroke="#8a8886" stroke-width=".8"/>
<rect x="9" y="4" width="9" height="2.6" fill="#c8c6c4" stroke="#8a8886" stroke-width=".8"/>
<rect x="4.2" y="9.4" width="2.6" height="8.6" fill="#c8c6c4" stroke="#8a8886" stroke-width=".8"/>
<rect x="12.6" y="14" width="3.8" height="6.6" fill="#3b8fe0" stroke="#1f78c6" stroke-width="1"/>
<rect x="16.4" y="9.2" width="4.1" height="11.4" fill="#fff" stroke="#555" stroke-width="1.1"/>
</svg>
<span class="t" style="left:1059.01px;top:209.60px;font-size:14.5px;line-height:16px;letter-spacing:-0.011px;color:#333;">Pivot<u>C</u>hart</span>
<svg class="b" style="left:1027px;top:241px;" width="22" height="22" viewBox="0 0 22 22">
<rect x="1.7" y="7.6" width="3.2" height="6.4" fill="#c8c6c4" stroke="#8a8886" stroke-width="1"/>
<rect x="9.2" y="4.8" width="4" height="3.6" fill="#3b8fe0" stroke="#1f78c6" stroke-width="1"/>
<rect x="4.9" y="1.9" width="4.3" height="12.1" fill="#fff" stroke="#555" stroke-width="1.1"/>
<rect x="9.8" y="9.6" width="10.6" height="10.6" fill="#fff" stroke="#555" stroke-width="1.2"/>
<path d="M12 12.2 H18.4 M12.4 14.6 V18.2 M14 14.8 H18.4" stroke="#777" stroke-width="1" fill="none"/>
</svg>
<span class="t" style="left:1059.01px;top:245.40px;font-size:14.5px;line-height:16px;letter-spacing:0.173px;color:#333;"><u>P</u>ivotChart &amp; PivotTable</span>
</div>
</body></html>
